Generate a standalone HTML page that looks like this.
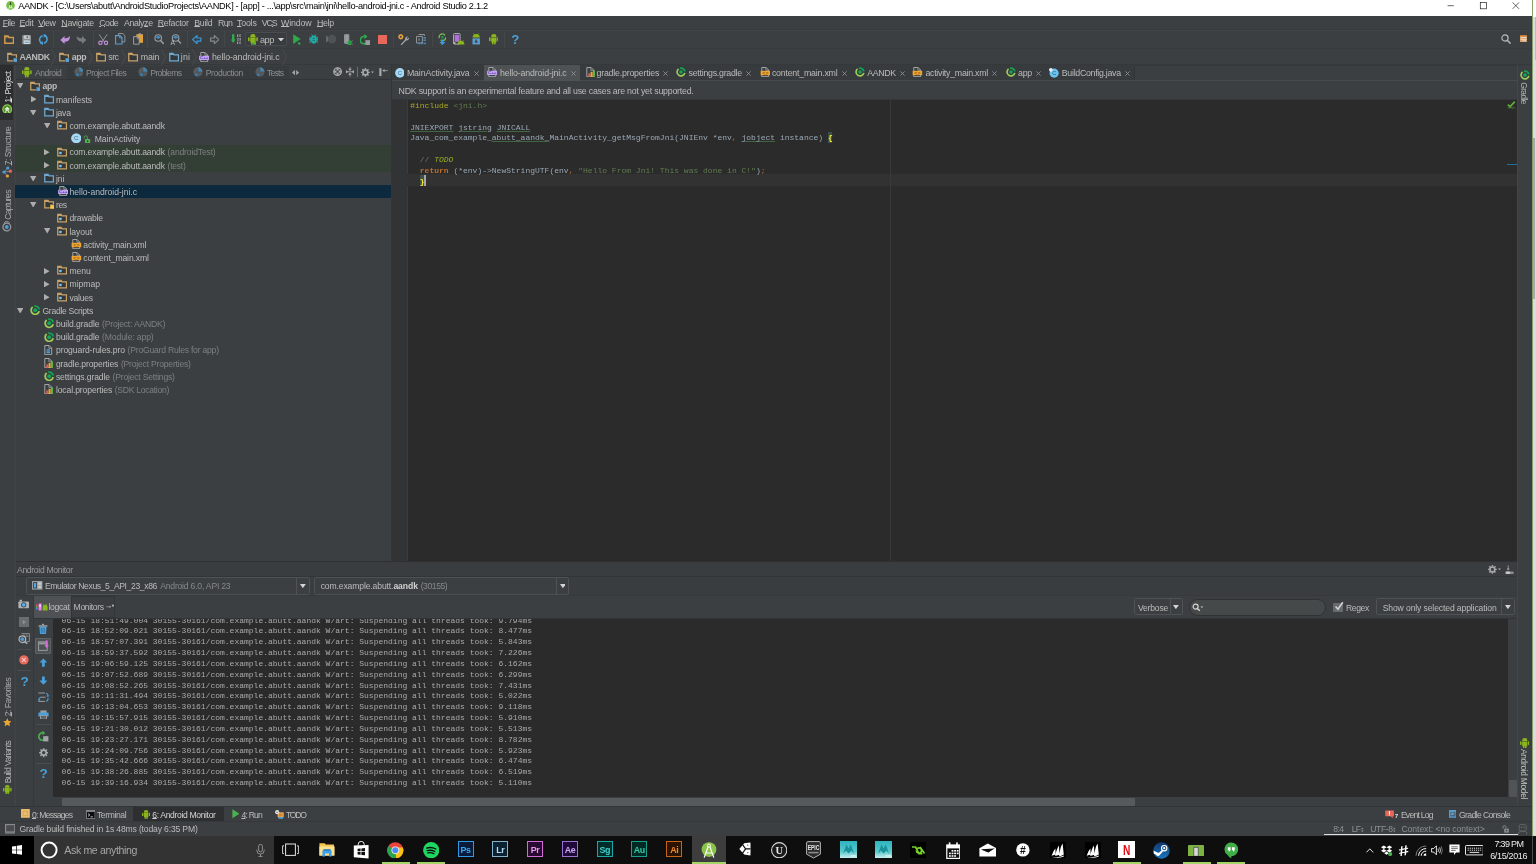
<!DOCTYPE html>
<html lang="en"><head><meta charset="utf-8"><title>AANDK - Android Studio 2.1.2</title>
<style>
html,body{margin:0;padding:0;background:#3c3f41;overflow:hidden}
#r{will-change:transform;position:relative;width:1536px;height:864px;overflow:hidden;background:#3c3f41;font-family:"Liberation Sans",sans-serif;font-size:8.6px;color:#bbb}
#r div,#r span,#r svg{position:absolute;display:block}
#r span{white-space:pre}
#r span span{position:static;display:inline}
#r .m{font-family:"Liberation Mono",monospace}
#r u{text-decoration:underline;text-decoration-thickness:0.6px;text-underline-offset:0.4px}
</style></head><body><div id="r">
<div style="left:0px;top:0px;width:1532px;height:15.8px;background:#ffffff;"></div>
<span style="left:18.2px;top:-0.3px;font-size:9.2px;line-height:12px;color:#000;letter-spacing:-0.31px;">AANDK - [C:\Users\abutt\AndroidStudioProjects\AANDK] - [app] - ...\app\src\main\jni\hello-android-jni.c - Android Studio 2.1.2</span>
<svg style="left:1444px;top:0px;" width="80" height="12" viewBox="0 0 80 12"><g stroke="#222" stroke-width="0.7" fill="none"><path d="M3.6 5.7H9.8"/><rect x="36.3" y="2.5" width="6.3" height="6.3"/><path d="M68.6 2.4L75 8.8M75 2.4L68.6 8.8"/></g></svg>
<div style="left:0px;top:15.8px;width:1532px;height:14.2px;background:#3c3f41;"></div>
<div style="left:0px;top:29.2px;width:1532px;height:0.8px;background:#383b3d;"></div>
<span style="left:2.7px;top:16.53px;font-size:8.8px;line-height:12px;color:#bbbbbb;letter-spacing:-0.5px;"><u>F</u>ile</span>
<span style="left:19.6px;top:16.53px;font-size:8.8px;line-height:12px;color:#bbbbbb;letter-spacing:-0.39px;"><u>E</u>dit</span>
<span style="left:38.3px;top:16.53px;font-size:8.8px;line-height:12px;color:#bbbbbb;letter-spacing:-0.43px;"><u>V</u>iew</span>
<span style="left:61.3px;top:16.53px;font-size:8.8px;line-height:12px;color:#bbbbbb;letter-spacing:-0.28px;"><u>N</u>avigate</span>
<span style="left:99.2px;top:16.53px;font-size:8.8px;line-height:12px;color:#bbbbbb;letter-spacing:-0.53px;"><u>C</u>ode</span>
<span style="left:123.9px;top:16.53px;font-size:8.8px;line-height:12px;color:#bbbbbb;letter-spacing:-0.36px;">Analy<u>z</u>e</span>
<span style="left:157.8px;top:16.53px;font-size:8.8px;line-height:12px;color:#bbbbbb;letter-spacing:-0.31px;"><u>R</u>efactor</span>
<span style="left:194.3px;top:16.53px;font-size:8.8px;line-height:12px;color:#bbbbbb;letter-spacing:-0.31px;"><u>B</u>uild</span>
<span style="left:218px;top:16.53px;font-size:8.8px;line-height:12px;color:#bbbbbb;letter-spacing:-0.65px;">R<u>u</u>n</span>
<span style="left:237px;top:16.53px;font-size:8.8px;line-height:12px;color:#bbbbbb;letter-spacing:-0.19px;"><u>T</u>ools</span>
<span style="left:261.7px;top:16.53px;font-size:8.8px;line-height:12px;color:#bbbbbb;letter-spacing:-1.06px;">VC<u>S</u></span>
<span style="left:281px;top:16.53px;font-size:8.8px;line-height:12px;color:#bbbbbb;letter-spacing:-0.15px;"><u>W</u>indow</span>
<span style="left:316.9px;top:16.53px;font-size:8.8px;line-height:12px;color:#bbbbbb;letter-spacing:-0.3px;"><u>H</u>elp</span>
<div style="left:0px;top:30px;width:1532px;height:18.3px;background:#3c3f41;"></div>
<div style="left:0px;top:30px;width:1532px;height:0.8px;background:#414446;"></div>
<div style="left:0px;top:48.1px;width:1532px;height:0.9px;background:#383b3d;"></div>
<div style="left:0px;top:49px;width:1532px;height:16px;background:#3c3f41;"></div>
<div style="left:0px;top:64.1px;width:1532px;height:0.8px;background:#36393b;"></div>
<span style="left:19.5px;top:51.33px;font-size:8.8px;line-height:12px;color:#bbbbbb;letter-spacing:-0.3px;font-weight:bold;">AANDK</span>
<span style="left:71.8px;top:51.33px;font-size:8.8px;line-height:12px;color:#bbbbbb;letter-spacing:-0.38px;font-weight:bold;">app</span>
<span style="left:108.3px;top:51.33px;font-size:8.8px;line-height:12px;color:#bbbbbb;letter-spacing:-0.51px;">src</span>
<span style="left:140.8px;top:51.33px;font-size:8.8px;line-height:12px;color:#bbbbbb;letter-spacing:-0.19px;">main</span>
<span style="left:180.8px;top:51.33px;font-size:8.8px;line-height:12px;color:#bbbbbb;letter-spacing:0.17px;">jni</span>
<span style="left:211.9px;top:51.33px;font-size:8.8px;line-height:12px;color:#bbbbbb;letter-spacing:-0.1px;">hello-android-jni.c</span>
<div style="left:53.3px;top:31px;width:0.7px;height:16.4px;background:#45484a;"></div>
<div style="left:92.7px;top:31px;width:0.7px;height:16.4px;background:#45484a;"></div>
<div style="left:147.4px;top:31px;width:0.7px;height:16.4px;background:#45484a;"></div>
<div style="left:186.6px;top:31px;width:0.7px;height:16.4px;background:#45484a;"></div>
<div style="left:224px;top:31px;width:0.7px;height:16.4px;background:#45484a;"></div>
<div style="left:392.6px;top:31px;width:0.7px;height:16.4px;background:#45484a;"></div>
<div style="left:431.5px;top:31px;width:0.7px;height:16.4px;background:#45484a;"></div>
<div style="left:503.5px;top:31px;width:0.7px;height:16.4px;background:#45484a;"></div>
<svg style="left:4px;top:34.9px;" width="10.4" height="9" viewBox="0 0 10.4 9"><path d="M0.8 0.9H4L5 2.5H9.5V8.2H0.8Z" fill="#3c3f41" stroke="#cf9c4e" stroke-width="1.5"/><path d="M0.8 0.9H4L4.8 2.5H0.8Z" fill="#cf9c4e"/></svg>
<svg style="left:22px;top:34.8px;" width="9.4" height="9.8" viewBox="0 0 9.4 9.8"><rect x="0.3" y="0.3" width="8.8" height="8.8" fill="#8d9092"/><rect x="1.8" y="0.3" width="5.8" height="3.6" fill="#c4c7c9"/><rect x="4.6" y="0.9" width="1.4" height="2.2" fill="#6a6d6f"/><rect x="1.8" y="5.4" width="5.8" height="3.7" fill="#d4d7d9"/><rect x="2.6" y="6.8" width="4.2" height="1" fill="#4a9fd8"/></svg>
<svg style="left:38.4px;top:34px;" width="10.8" height="10.8" viewBox="0 0 10.8 10.8"><path d="M3.97 9.06A3.90 3.90 0 0 1 6.63 1.74" fill="none" stroke="#4a9fd8" stroke-width="1.5" stroke-dasharray="9.6 20"/><path d="M6.63 1.74A3.90 3.90 0 0 1 3.97 9.06" fill="none" stroke="#4a9fd8" stroke-width="1.5" stroke-dasharray="9.6 20"/><path d="M5.6 -0.2L9 1.6L5.8 3.6Z" fill="#4a9fd8"/><path d="M5 11L1.6 9.2L4.8 7.2Z" fill="#4a9fd8"/></svg>
<svg style="left:59.6px;top:34.7px;" width="10.6" height="9.4" viewBox="0 0 10.6 9.4"><path d="M0.3 5L4.6 1V3.4Q9.6 3 9.8 0.6Q10.6 6.4 4.6 6.8V9Z" fill="#c48fdc"/></svg>
<svg style="left:76.4px;top:34.7px;" width="10.6" height="9.4" viewBox="0 0 10.6 9.4"><g transform="translate(10.6 0) scale(-1 1)"><path d="M0.3 5L4.6 1V3.4Q9.6 3 9.8 0.6Q10.6 6.4 4.6 6.8V9Z" fill="#787b7d"/></g></svg>
<svg style="left:98px;top:33.6px;" width="10.4" height="11" viewBox="0 0 10.4 11"><path d="M1.2 0.4L6.4 8M9.2 0.4L4 8" stroke="#9a9d9f" stroke-width="0.9" fill="none"/><circle cx="2.4" cy="8.8" r="1.7" fill="none" stroke="#c48fdc" stroke-width="1.1"/><circle cx="8" cy="8.8" r="1.7" fill="none" stroke="#c48fdc" stroke-width="1.1"/></svg>
<svg style="left:115.2px;top:33.4px;" width="10.4" height="11.6" viewBox="0 0 10.4 11.6"><path d="M3.4 0.5H7.8L9.9 2.6V8.8H3.4Z" fill="#3c3f41" stroke="#9a9d9f" stroke-width="0.9"/><path d="M0.6 2.6H5L7 4.6V11H0.6Z" fill="#3c3f41" stroke="#5a9fd4" stroke-width="1.1"/><path d="M4.6 2.8V5H6.8" fill="none" stroke="#5a9fd4" stroke-width="0.8"/></svg>
<svg style="left:132.6px;top:33.2px;" width="10.6" height="11.8" viewBox="0 0 10.6 11.8"><rect x="3.4" y="1.2" width="6.8" height="8.6" fill="#dda23c"/><rect x="5.4" y="0.3" width="2.8" height="1.8" rx="0.5" fill="#9a9d9f"/><path d="M0.6 3.6H4.4L6.2 5.4V11.2H0.6Z" fill="#3c3f41" stroke="#a7a9ab" stroke-width="0.9"/><path d="M4.2 3.8V5.8H6" fill="none" stroke="#a7a9ab" stroke-width="0.7"/></svg>
<svg style="left:153.6px;top:33.8px;" width="10.6" height="10.8" viewBox="0 0 10.6 10.8"><circle cx="4.2" cy="4" r="3.3" fill="#3c3f41" stroke="#9a9d9f" stroke-width="1.1"/><ellipse cx="4.2" cy="3.3" rx="2" ry="1.4" fill="#3f8fc8"/><path d="M6.6 6.6L9.8 9.9" stroke="#9a9d9f" stroke-width="1.5"/></svg>
<svg style="left:170.2px;top:33.8px;" width="11.4" height="11.4" viewBox="0 0 11.4 11.4"><g transform="translate(1.4 0)"><circle cx="4.2" cy="4" r="3.3" fill="#3c3f41" stroke="#9a9d9f" stroke-width="1.1"/><ellipse cx="4.2" cy="3.3" rx="2" ry="1.4" fill="#3f8fc8"/><path d="M6.6 6.6L9.6 9.4" stroke="#9a9d9f" stroke-width="1.4"/></g><text x="2.7" y="11.2" font-family="Liberation Sans,sans-serif" font-size="6.8" text-anchor="middle" fill="#b4b7b9">A</text></svg>
<svg style="left:192.4px;top:34.9px;" width="9.6" height="9.4" viewBox="0 0 9.6 9.4"><path d="M0.6 4.6L5 0.6V3H8.8V6.2H5V8.6Z" fill="none" stroke="#3a9ae0" stroke-width="1.2" stroke-linejoin="miter"/></svg>
<svg style="left:209.8px;top:34.9px;" width="9.6" height="9.4" viewBox="0 0 9.6 9.4"><g transform="translate(9.4 0) scale(-1 1)"><path d="M0.6 4.6L5 0.6V3H8.8V6.2H5V8.6Z" fill="none" stroke="#85888a" stroke-width="1.2" stroke-linejoin="miter"/></g></svg>
<svg style="left:231px;top:33.8px;" width="10.8" height="10.6" viewBox="0 0 10.8 10.6"><path d="M1 0.2H3.4V5.6H4.6L2.2 9L-0.2 5.6H1Z" fill="#30a94c"/><g fill="#9a9d9f"><rect x="6" y="0.4" width="1.2" height="2.6"/><rect x="8.4" y="0.4" width="1.2" height="2.6"/><rect x="8.1" y="0.9" width="1.8" height="1.6" fill="#3c3f41"/><rect x="8.4" y="0.4" width="0.5" height="2.6"/><rect x="9.4" y="0.4" width="0.5" height="2.6"/><rect x="6" y="4" width="0.5" height="2.6"/><rect x="7" y="4" width="0.5" height="2.6"/><rect x="6" y="4" width="1.5" height="0.5"/><rect x="6" y="6.1" width="1.5" height="0.5"/><rect x="8.6" y="4" width="1.2" height="2.6"/><rect x="6" y="7.6" width="1.2" height="2.6"/><rect x="8.4" y="7.6" width="0.5" height="2.6"/><rect x="9.4" y="7.6" width="0.5" height="2.6"/><rect x="8.4" y="7.6" width="1.5" height="0.5"/><rect x="8.4" y="9.7" width="1.5" height="0.5"/></g></svg>
<div style="left:245.1px;top:32.3px;width:41.8px;height:13.9px;background:#3a3d3f;border:0.9px solid #4a4d4f;box-sizing:border-box;border-radius:2px;box-shadow:inset 0 0 0 0.6px #35383a"></div>
<svg style="left:247.75px;top:34.3px;" width="9.89" height="10.81" viewBox="0 0 9.7 10.6"><path d="M2.2 3.1A2.65 3.1 0 0 1 7.5 3.1Z" fill="#8ab51c"/><path d="M2.2 3.5H7.5V7.7A0.6 0.6 0 0 1 6.9 8.3H2.8A0.6 0.6 0 0 1 2.2 7.7Z" fill="#8ab51c"/><rect x="0" y="3.2" width="1.6" height="4" rx="0.8" fill="#8ab51c"/><rect x="8.1" y="3.2" width="1.6" height="4" rx="0.8" fill="#8ab51c"/><rect x="3" y="7.6" width="1.6" height="3" rx="0.8" fill="#8ab51c"/><rect x="5.1" y="7.6" width="1.6" height="3" rx="0.8" fill="#8ab51c"/><path d="M2.9 0L3.6 1M6.8 0L6.1 1" stroke="#8ab51c" stroke-width="0.35"/></svg>
<svg style="left:253.6px;top:42.1px;" width="2.8" height="2.8" viewBox="0 0 2.8 2.8"><circle cx="1.4" cy="1.4" r="1.35" fill="#3fc04a"/></svg>
<span style="left:259.9px;top:34.2px;font-size:9.2px;line-height:12px;color:#bbbbbb;letter-spacing:-0.42px;">app</span>
<svg style="left:277.7px;top:37.8px;" width="6" height="3.6" viewBox="0 0 6 3.6"><path d="M0 0H6L3 3.6Z" fill="#d0d0d0"/></svg>
<svg style="left:292.6px;top:34px;" width="8.6" height="10.8" viewBox="0 0 8.6 10.8"><path d="M0.2 0.2V10L7.6 5.1Z" fill="#30a94c"/><circle cx="6.2" cy="9.4" r="1.25" fill="#30a94c"/></svg>
<svg style="left:308.8px;top:34.2px;" width="9.6" height="10" viewBox="0 0 9.6 10"><ellipse cx="4.8" cy="5.6" rx="3.1" ry="4.1" fill="#22aaa4"/><path d="M2.6 0.4L3.8 2.2M7 0.4L5.8 2.2" stroke="#22aaa4" stroke-width="1"/><path d="M0.4 2.8L2.4 3.8M9.2 2.8L7.2 3.8M0 5.6H2M9.6 5.6H7.6M0.4 8.6L2.4 7.4M9.2 8.6L7.2 7.4M0.2 4.2L2 4.6M9.4 4.2L7.6 4.6M0.2 7L2 6.6M9.4 7L7.6 6.6" stroke="#22aaa4" stroke-width="0.9"/><path d="M3.6 4.4H6M3.6 6.6H6" stroke="#2c5c5c" stroke-width="0.8"/></svg>
<svg style="left:325.8px;top:34.2px;" width="10.2" height="10" viewBox="0 0 10.2 10"><defs><pattern id="chk" width="1.6" height="1.6" patternUnits="userSpaceOnUse"><rect width="1.6" height="1.6" fill="#5a5d5f"/><rect width="0.8" height="0.8" fill="#46494b"/><rect x="0.8" y="0.8" width="0.8" height="0.8" fill="#46494b"/></pattern></defs><path d="M0.2 1.6V8.4L4.4 5Z" fill="#6e7173"/><circle cx="6" cy="5" r="4.3" fill="url(#chk)"/></svg>
<svg style="left:344.2px;top:33.6px;" width="9" height="11.2" viewBox="0 0 9 11.2"><rect x="0.5" y="0.4" width="4.4" height="9" rx="0.6" fill="#8a8d8f" stroke="#a4a7a9" stroke-width="0.7"/><rect x="1.4" y="1.4" width="2.6" height="6.4" fill="#9a9d9f"/><rect x="3.8" y="6.4" width="3.6" height="4.6" rx="1.2" fill="#30a94c"/><path d="M7.2 7.6L8.8 6.8M7.2 9.8L8.8 10.4M3.8 7.6L3 7M3.8 9.8L3 10.4" stroke="#9aa09a" stroke-width="0.6"/><path d="M4.6 8H6.6M4.6 9.4H6.6" stroke="#1c6a30" stroke-width="0.5"/></svg>
<svg style="left:360px;top:33.9px;" width="10.4" height="11.2" viewBox="0 0 10.4 11.2"><path d="M7.2 7.6A3.6 3.6 0 1 1 4.6 2.6" fill="none" stroke="#30a94c" stroke-width="1.6"/><path d="M4.2 0L7.6 2.4L4.2 5Z" fill="#30a94c"/><rect x="5.4" y="6.2" width="4.8" height="4.8" fill="#9a9d9f"/></svg>
<div style="left:378px;top:34.9px;width:8.8px;height:8.7px;background:#e8685c;"></div>
<svg style="left:397.6px;top:33.6px;" width="11.4" height="11.2" viewBox="0 0 11.4 11.2"><path d="M2.6 10.6L7.2 5.6A2.5 2.5 0 0 1 10.2 2.6L8.6 4.2L9.4 5L11 3.4A2.5 2.5 0 0 1 8 6.4L3.6 11.2Z" fill="#a7a9ab"/><circle cx="2.8" cy="2.8" r="1.7" fill="none" stroke="#e8a23c" stroke-width="1.5"/><path d="M2.8 0V1M2.8 4.6V5.6M0 2.8H1M4.6 2.8H5.6M0.8 0.8L1.5 1.5M4.1 4.1L4.8 4.8M0.8 4.8L1.5 4.1M4.1 1.5L4.8 0.8" stroke="#e8a23c" stroke-width="0.8"/></svg>
<svg style="left:415.8px;top:33.8px;" width="10.6" height="10.8" viewBox="0 0 10.6 10.8"><path d="M2.6 0.5H8.4V2M0.5 2.4H6.4V9H0.5Z" fill="none" stroke="#9a9d9f" stroke-width="0.9"/><rect x="2" y="4.4" width="2" height="2.4" fill="#6a6d6f"/><g fill="#3f97dc"><rect x="7.6" y="3" width="1.2" height="1.6"/><rect x="9.2" y="3" width="1.2" height="1.6"/><rect x="7.6" y="5.4" width="1.2" height="1.6"/><rect x="9.2" y="5.4" width="1.2" height="1.6"/><rect x="2.6" y="8.6" width="1.6" height="1.6"/><rect x="5" y="8.6" width="1.6" height="1.6"/><rect x="7.6" y="8.6" width="1.2" height="1.6"/><rect x="9.2" y="8.6" width="1.2" height="1.6"/></g></svg>
<svg style="left:437.6px;top:32.8px;" width="8.8" height="12.4" viewBox="0 0 8.8 12.4"><circle cx="4.4" cy="4.2" r="3.3" fill="none" stroke="#7fbf52" stroke-width="1.3" stroke-dasharray="7 2.2 9 2.5"/><rect x="3.2" y="3" width="2.4" height="2.4" fill="#12a050"/><path d="M3.2 6.8H5.6V9H7.4L4.4 12.2L1.4 9H3.2Z" fill="#3f97dc"/></svg>
<svg style="left:453.2px;top:33.4px;" width="11.8" height="11.6" viewBox="0 0 11.8 11.6"><rect x="0.5" y="0.5" width="6.6" height="10.6" rx="1" fill="#3c3f41" stroke="#a7a9ab" stroke-width="1"/><rect x="1.6" y="1.8" width="4.4" height="7" fill="#b070d8"/><rect x="0.8" y="9.4" width="1.6" height="1.4" fill="#d8d8d8"/><path d="M4.6 11.4A3.4 3.6 0 0 1 11.4 11.4Z" fill="#8ab51c"/><path d="M5.4 7L6.4 8.4M10.6 7L9.6 8.4" stroke="#8ab51c" stroke-width="0.6"/></svg>
<svg style="left:472.2px;top:33px;" width="8.4" height="12" viewBox="0 0 8.4 12"><path d="M0.6 4.6A3.6 3.6 0 0 1 7.8 4.6Z" fill="#8ab51c"/><path d="M1.4 0.2L2.6 1.8M7 0.2L5.8 1.8" stroke="#8ab51c" stroke-width="0.6"/><rect x="0.5" y="5.4" width="7.4" height="6" fill="#5a9fd4"/><path d="M3.4 6.4H5V8.4H6.2L4.2 10.6L2.2 8.4H3.4Z" fill="#2b2b2b"/><path d="M4.2 5.4V11.4" stroke="#8cc0e8" stroke-width="0.4"/></svg>
<svg style="left:488.65px;top:34.1px;" width="9.7" height="10.6" viewBox="0 0 9.7 10.6"><path d="M2.2 3.1A2.65 3.1 0 0 1 7.5 3.1Z" fill="#8ab51c"/><path d="M2.2 3.5H7.5V7.7A0.6 0.6 0 0 1 6.9 8.3H2.8A0.6 0.6 0 0 1 2.2 7.7Z" fill="#8ab51c"/><rect x="0" y="3.2" width="1.6" height="4" rx="0.8" fill="#8ab51c"/><rect x="8.1" y="3.2" width="1.6" height="4" rx="0.8" fill="#8ab51c"/><rect x="3" y="7.6" width="1.6" height="3" rx="0.8" fill="#8ab51c"/><rect x="5.1" y="7.6" width="1.6" height="3" rx="0.8" fill="#8ab51c"/><path d="M2.9 0L3.6 1M6.8 0L6.1 1" stroke="#8ab51c" stroke-width="0.35"/></svg>
<span style="left:511.2px;top:32.85px;font-size:13.2px;line-height:14px;color:#4a9fd8;font-weight:bold;">?</span>
<svg style="left:1501px;top:33.6px;" width="10.4" height="10.4" viewBox="0 0 10.4 10.4"><circle cx="4" cy="4" r="3.1" fill="none" stroke="#b4b7b9" stroke-width="1.2"/><path d="M6.2 6.2L9.6 9.6" stroke="#b4b7b9" stroke-width="1.5"/></svg>
<svg style="left:1519.6px;top:35px;" width="7.2" height="7" viewBox="0 0 7.2 7"><rect width="7.2" height="7" fill="#d9a066"/><rect x="0" y="0" width="7.2" height="1.4" fill="#c87c3c"/><path d="M0.6 2.6H6.6M0.6 4.4H6.6" stroke="#f4e4c8" stroke-width="0.9"/><rect x="2.4" y="4.8" width="3.6" height="1.6" fill="#d8c8c8"/></svg>
<svg style="left:6.65px;top:51.5px;" width="10.2" height="10.2" viewBox="0 0 16 16"><path d="M1.2 2.2H6.4L7.8 4.6H14.8V13.8H1.2Z" fill="#33373a" stroke="#c9a268" stroke-width="2" stroke-linejoin="miter"/><path d="M1.2 2.2H6.4L7.4 4.6H1.2Z" fill="#c9a268"/><rect x="9.4" y="9" width="6.6" height="6.6" fill="#3c3f41"/><rect x="10.2" y="9.8" width="5.8" height="5.8" fill="#5da3d4"/></svg>
<svg style="left:59.25px;top:51.5px;" width="10.2" height="10.2" viewBox="0 0 16 16"><path d="M1.2 2.2H6.4L7.8 4.6H14.8V13.8H1.2Z" fill="#33373a" stroke="#c9a268" stroke-width="2" stroke-linejoin="miter"/><path d="M1.2 2.2H6.4L7.4 4.6H1.2Z" fill="#c9a268"/><rect x="9.4" y="9" width="6.6" height="6.6" fill="#3c3f41"/><rect x="10.2" y="9.8" width="5.8" height="5.8" fill="#5da3d4"/></svg>
<svg style="left:96.05px;top:51.5px;" width="10.2" height="10.2" viewBox="0 0 16 16"><path d="M1.2 2.2H6.4L7.8 4.6H14.8V13.8H1.2Z" fill="#33373a" stroke="#c9a268" stroke-width="2" stroke-linejoin="miter"/><path d="M1.2 2.2H6.4L7.4 4.6H1.2Z" fill="#c9a268"/></svg>
<svg style="left:128.35px;top:51.5px;" width="10.2" height="10.2" viewBox="0 0 16 16"><path d="M1.2 2.2H6.4L7.8 4.6H14.8V13.8H1.2Z" fill="#33373a" stroke="#c9a268" stroke-width="2" stroke-linejoin="miter"/><path d="M1.2 2.2H6.4L7.4 4.6H1.2Z" fill="#c9a268"/></svg>
<svg style="left:168.65px;top:51.5px;" width="10.2" height="10.2" viewBox="0 0 16 16"><path d="M1.2 2.2H6.4L7.8 4.6H14.8V13.8H1.2Z" fill="#33373a" stroke="#6eaad2" stroke-width="2" stroke-linejoin="miter"/><path d="M1.2 2.2H6.4L7.4 4.6H1.2Z" fill="#6eaad2"/></svg>
<svg style="left:199.2px;top:51.9px;" width="10.2" height="10.2" viewBox="0 0 16 16"><path d="M2.8 0.8H9.6L13.6 4.8V15.2H2.8Z" fill="#3c3f41" stroke="#a7a9ab" stroke-width="1.5"/><path d="M9.2 1V5.2H13.4" fill="none" stroke="#a7a9ab" stroke-width="1.2"/><rect x="0.2" y="6" width="15.6" height="6.6" fill="#c3a4f4"/><text x="8" y="11.7" font-family="Liberation Sans,sans-serif" font-weight="bold" font-size="6.8" text-anchor="middle" fill="#5a3aa8">C++</text></svg>
<svg style="left:51.4px;top:48.6px;" width="5" height="16.2" viewBox="0 0 5 16.2"><path d="M0.4 0.2L4.4 8.1L0.4 16" fill="none" stroke="#4c4f51" stroke-width="0.8"/></svg>
<svg style="left:88.2px;top:48.6px;" width="5" height="16.2" viewBox="0 0 5 16.2"><path d="M0.4 0.2L4.4 8.1L0.4 16" fill="none" stroke="#4c4f51" stroke-width="0.8"/></svg>
<svg style="left:121px;top:48.6px;" width="5" height="16.2" viewBox="0 0 5 16.2"><path d="M0.4 0.2L4.4 8.1L0.4 16" fill="none" stroke="#4c4f51" stroke-width="0.8"/></svg>
<svg style="left:161px;top:48.6px;" width="5" height="16.2" viewBox="0 0 5 16.2"><path d="M0.4 0.2L4.4 8.1L0.4 16" fill="none" stroke="#4c4f51" stroke-width="0.8"/></svg>
<svg style="left:192.4px;top:48.6px;" width="5" height="16.2" viewBox="0 0 5 16.2"><path d="M0.4 0.2L4.4 8.1L0.4 16" fill="none" stroke="#4c4f51" stroke-width="0.8"/></svg>
<svg style="left:281.6px;top:48.6px;" width="5" height="16.2" viewBox="0 0 5 16.2"><path d="M0.4 0.2L4.4 8.1L0.4 16" fill="none" stroke="#4c4f51" stroke-width="0.8"/></svg>
<svg style="left:5.9px;top:0.6px;" width="9" height="10" viewBox="0 0 9 10"><circle cx="4.5" cy="4.4" r="4.3" fill="#78c043"/><path d="M4.5 2.2L2.6 8.6M4.5 2.2L6.4 8.6" fill="none" stroke="#eaf6de" stroke-width="0.8"/><path d="M3.2 6.4H5.8" stroke="#eaf6de" stroke-width="0.7"/><path d="M4.5 1.2V3.4" stroke="#3a4a30" stroke-width="1"/><circle cx="4.5" cy="3.2" r="1" fill="#3a4a30"/></svg>
<div style="left:0px;top:65px;width:14.5px;height:757px;background:#3c3f41;"></div>
<div style="left:0px;top:65px;width:14px;height:55.4px;background:#2b2d2e;"></div>
<div style="left:13.4px;top:65px;width:0.7px;height:741px;background:#393b3d;"></div>
<div style="left:14.7px;top:65px;width:376.1px;height:15px;background:#3c3f41;"></div>
<div style="left:67px;top:65.5px;width:222px;height:13.5px;background:#383b3d;"></div>
<div style="left:14.7px;top:79.2px;width:376.1px;height:0.8px;background:#323537;"></div>
<svg style="left:22.35px;top:67px;" width="9.7" height="10.6" viewBox="0 0 9.7 10.6"><path d="M2.2 3.1A2.65 3.1 0 0 1 7.5 3.1Z" fill="#8ab51c"/><path d="M2.2 3.5H7.5V7.7A0.6 0.6 0 0 1 6.9 8.3H2.8A0.6 0.6 0 0 1 2.2 7.7Z" fill="#8ab51c"/><rect x="0" y="3.2" width="1.6" height="4" rx="0.8" fill="#8ab51c"/><rect x="8.1" y="3.2" width="1.6" height="4" rx="0.8" fill="#8ab51c"/><rect x="3" y="7.6" width="1.6" height="3" rx="0.8" fill="#8ab51c"/><rect x="5.1" y="7.6" width="1.6" height="3" rx="0.8" fill="#8ab51c"/><path d="M2.9 0L3.6 1M6.8 0L6.1 1" stroke="#8ab51c" stroke-width="0.35"/></svg>
<span style="left:35px;top:66.75px;font-size:8.6px;line-height:12px;color:#8c8e90;letter-spacing:-0.46px;">Android</span>
<svg style="left:73.6px;top:67px;" width="9.8" height="9.8" viewBox="0 0 16 16"><circle cx="8" cy="8" r="7.5" fill="#585b5d"/><path d="M8 8V0.5A7.5 7.5 0 0 1 15.5 8Z" fill="#4a84ab"/><path d="M8 8V15.5A7.5 7.5 0 0 1 1.9 12.4Z" fill="#3f7ea8"/><path d="M8 0.5V15.5M8 8H15.5M8 8L1.9 12.4" stroke="#3c3f41" stroke-width="0.7"/></svg>
<span style="left:86px;top:66.75px;font-size:8.6px;line-height:12px;color:#8c8e90;letter-spacing:-0.55px;">Project Files</span>
<svg style="left:138px;top:67px;" width="9.8" height="9.8" viewBox="0 0 16 16"><circle cx="8" cy="8" r="7.5" fill="#585b5d"/><path d="M8 8V0.5A7.5 7.5 0 0 1 15.5 8Z" fill="#4a84ab"/><path d="M8 8V15.5A7.5 7.5 0 0 1 1.9 12.4Z" fill="#3f7ea8"/><path d="M8 0.5V15.5M8 8H15.5M8 8L1.9 12.4" stroke="#3c3f41" stroke-width="0.7"/></svg>
<span style="left:150.3px;top:66.75px;font-size:8.6px;line-height:12px;color:#8c8e90;letter-spacing:-0.65px;">Problems</span>
<svg style="left:193.3px;top:67px;" width="9.8" height="9.8" viewBox="0 0 16 16"><circle cx="8" cy="8" r="7.5" fill="#585b5d"/><path d="M8 8V0.5A7.5 7.5 0 0 1 15.5 8Z" fill="#4a84ab"/><path d="M8 8V15.5A7.5 7.5 0 0 1 1.9 12.4Z" fill="#3f7ea8"/><path d="M8 0.5V15.5M8 8H15.5M8 8L1.9 12.4" stroke="#3c3f41" stroke-width="0.7"/></svg>
<span style="left:205.7px;top:66.75px;font-size:8.6px;line-height:12px;color:#8c8e90;letter-spacing:-0.39px;">Production</span>
<svg style="left:255px;top:67px;" width="9.8" height="9.8" viewBox="0 0 16 16"><circle cx="8" cy="8" r="7.5" fill="#585b5d"/><path d="M8 8V0.5A7.5 7.5 0 0 1 15.5 8Z" fill="#4a84ab"/><path d="M8 8V15.5A7.5 7.5 0 0 1 1.9 12.4Z" fill="#3f7ea8"/><path d="M8 0.5V15.5M8 8H15.5M8 8L1.9 12.4" stroke="#3c3f41" stroke-width="0.7"/></svg>
<span style="left:267.1px;top:66.75px;font-size:8.6px;line-height:12px;color:#8c8e90;letter-spacing:-0.79px;">Tests</span>
<svg style="left:291.7px;top:69.8px;" width="7.2" height="5.2" viewBox="0 0 7.2 5.2"><path d="M3 0V5.2L0 2.6ZM4.2 0V5.2L7.2 2.6Z" fill="#a4a6a8"/></svg>
<svg style="left:333px;top:67.3px;" width="9.2" height="9.2" viewBox="0 0 9.2 9.2"><circle cx="4.6" cy="4.6" r="3.8" fill="none" stroke="#a6a8aa" stroke-width="1.3"/><path d="M4.6 0.8V3.5M4.6 5.7V8.4M0.8 4.6H3.5M5.7 4.6H8.4" stroke="#a6a8aa" stroke-width="2.1"/></svg>
<svg style="left:346px;top:67.4px;" width="8" height="9.6" viewBox="0 0 8 9.6"><path d="M4 0V2.6M4 7V9.6" stroke="#a6a8aa" stroke-width="0.8"/><path d="M2.2 1.8L4 4L5.8 1.8ZM2.2 7.8L4 5.6L5.8 7.8Z" fill="#a6a8aa"/><path d="M0 3V6.6L2.4 4.8ZM8 3V6.6L5.6 4.8Z" fill="#a6a8aa"/><path d="M1 4.8H7" stroke="#a6a8aa" stroke-width="0.9"/></svg>
<div style="left:357px;top:66.7px;width:1px;height:10.1px;background:#6c6e70;"></div>
<svg style="left:361.2px;top:67.8px;" width="14" height="9" viewBox="0 0 14 9"><g transform="translate(4.4 4.4)"><circle r="2.4" fill="none" stroke="#a6a8aa" stroke-width="1.6"/><g stroke="#a6a8aa" stroke-width="1.4"><path d="M0 -4.4V-2.6M0 4.4V2.6M-4.4 0H-2.6M4.4 0H2.6M-3.1 -3.1L-1.9 -1.9M3.1 3.1L1.9 1.9M-3.1 3.1L-1.9 1.9M3.1 -3.1L1.9 -1.9"/></g></g><path d="M10 3.4H13L11.5 5.2Z" fill="#a6a8aa"/></svg>
<svg style="left:378.6px;top:68px;" width="9.4" height="8.4" viewBox="0 0 9.4 8.4"><path d="M1.4 0.2V8" stroke="#a6a8aa" stroke-width="2.2"/><path d="M4.4 2.6H8.8" stroke="#a6a8aa" stroke-width="0.8"/><path d="M5.6 1L3.2 2.6L5.6 4.2Z" fill="#a6a8aa"/></svg>
<div style="left:14.7px;top:80px;width:376.1px;height:481.3px;background:#3c3f41;"></div>
<div style="left:390.8px;top:65px;width:0.8px;height:496.3px;background:#323537;"></div>
<div style="left:14.1px;top:65px;width:1.5px;height:496.3px;background:#404244;"></div>
<div style="left:14.7px;top:145.4px;width:376.1px;height:26.4px;background:#333e35;"></div>
<div style="left:14.7px;top:185px;width:376.1px;height:13.2px;background:#0d293e;"></div>
<svg style="left:16.8px;top:83.1px;" width="6.4" height="5.6" viewBox="0 0 6.4 5.6"><path d="M0 0H6.4L3.2 5.6Z" fill="#adadad"/></svg>
<svg style="left:30.15px;top:80.5px;" width="10.2" height="10.2" viewBox="0 0 16 16"><path d="M1.2 2.2H6.4L7.8 4.6H14.8V13.8H1.2Z" fill="#33373a" stroke="#c9a268" stroke-width="2" stroke-linejoin="miter"/><path d="M1.2 2.2H6.4L7.4 4.6H1.2Z" fill="#c9a268"/><rect x="9.4" y="9" width="6.6" height="6.6" fill="#3c3f41"/><rect x="10.2" y="9.8" width="5.8" height="5.8" fill="#5da3d4"/></svg>
<span style="left:42.4px;top:80.35px;font-size:8.6px;line-height:12px;color:#bbbbbb;letter-spacing:-0.2px;font-weight:bold;">app</span>
<svg style="left:30.85px;top:96px;" width="5.6" height="6.4" viewBox="0 0 5.6 6.4"><path d="M0 0V6.4L5.6 3.2Z" fill="#adadad"/></svg>
<svg style="left:43.7px;top:93.7px;" width="10.2" height="10.2" viewBox="0 0 16 16"><path d="M1.2 2.2H6.4L7.8 4.6H14.8V13.8H1.2Z" fill="#33373a" stroke="#6eaad2" stroke-width="2" stroke-linejoin="miter"/><path d="M1.2 2.2H6.4L7.4 4.6H1.2Z" fill="#6eaad2"/></svg>
<span style="left:55.95px;top:93.55px;font-size:8.6px;line-height:12px;color:#bbbbbb;letter-spacing:-0.08px;">manifests</span>
<svg style="left:30.35px;top:109.5px;" width="6.4" height="5.6" viewBox="0 0 6.4 5.6"><path d="M0 0H6.4L3.2 5.6Z" fill="#adadad"/></svg>
<svg style="left:43.7px;top:106.9px;" width="10.2" height="10.2" viewBox="0 0 16 16"><path d="M1.2 2.2H6.4L7.8 4.6H14.8V13.8H1.2Z" fill="#33373a" stroke="#6eaad2" stroke-width="2" stroke-linejoin="miter"/><path d="M1.2 2.2H6.4L7.4 4.6H1.2Z" fill="#6eaad2"/></svg>
<span style="left:55.95px;top:106.75px;font-size:8.6px;line-height:12px;color:#bbbbbb;letter-spacing:-0.26px;">java</span>
<svg style="left:43.9px;top:122.7px;" width="6.4" height="5.6" viewBox="0 0 6.4 5.6"><path d="M0 0H6.4L3.2 5.6Z" fill="#adadad"/></svg>
<svg style="left:57.25px;top:120.1px;" width="10.2" height="10.2" viewBox="0 0 16 16"><path d="M1.2 2.2H6.4L7.8 4.6H14.8V13.8H1.2Z" fill="#33373a" stroke="#c9a268" stroke-width="2" stroke-linejoin="miter"/><path d="M1.2 2.2H6.4L7.4 4.6H1.2Z" fill="#c9a268"/><rect x="3.5" y="7.4" width="3.8" height="3.8" rx="1" fill="#74c2f0"/></svg>
<span style="left:69.5px;top:119.95px;font-size:8.6px;line-height:12px;color:#bbbbbb;letter-spacing:-0.13px;">com.example.abutt.aandk</span>
<svg style="left:70.95px;top:132.8px;" width="10.5" height="10.5" viewBox="0 0 16 16"><circle cx="8" cy="8" r="7.8" fill="#a5d8f3"/><text x="8" y="11.4" font-family="Liberation Sans,sans-serif" font-size="9.5" text-anchor="middle" fill="#4a6a80">C</text></svg>
<svg style="left:83.2px;top:134.5px;" width="7.4" height="8.6" viewBox="0 0 7.4 8.6"><path d="M1.2 3.4V2.4A1.6 1.6 0 0 1 4.4 2.4V4.2" fill="none" stroke="#4aa54a" stroke-width="1"/><rect x="2" y="4" width="5.2" height="4.4" rx="0.5" fill="#4fb14f"/><rect x="4" y="5.3" width="1.2" height="1.8" fill="#3c3f41"/></svg>
<span style="left:94.7px;top:133.15px;font-size:8.6px;line-height:12px;color:#bbbbbb;letter-spacing:-0.01px;">MainActivity</span>
<svg style="left:44.4px;top:148.8px;" width="5.6" height="6.4" viewBox="0 0 5.6 6.4"><path d="M0 0V6.4L5.6 3.2Z" fill="#adadad"/></svg>
<svg style="left:57.25px;top:146.5px;" width="10.2" height="10.2" viewBox="0 0 16 16"><path d="M1.2 2.2H6.4L7.8 4.6H14.8V13.8H1.2Z" fill="#33373a" stroke="#c9a268" stroke-width="2" stroke-linejoin="miter"/><path d="M1.2 2.2H6.4L7.4 4.6H1.2Z" fill="#c9a268"/><rect x="3.5" y="7.4" width="3.8" height="3.8" rx="1" fill="#74c2f0"/></svg>
<span style="left:69.5px;top:146.35px;font-size:8.6px;line-height:12px;color:#bbbbbb;letter-spacing:-0.13px;">com.example.abutt.aandk</span>
<span style="left:167.6px;top:146.35px;font-size:8.6px;line-height:12px;color:#7d8082;letter-spacing:-0.17px;">(androidTest)</span>
<svg style="left:44.4px;top:162px;" width="5.6" height="6.4" viewBox="0 0 5.6 6.4"><path d="M0 0V6.4L5.6 3.2Z" fill="#adadad"/></svg>
<svg style="left:57.25px;top:159.7px;" width="10.2" height="10.2" viewBox="0 0 16 16"><path d="M1.2 2.2H6.4L7.8 4.6H14.8V13.8H1.2Z" fill="#33373a" stroke="#c9a268" stroke-width="2" stroke-linejoin="miter"/><path d="M1.2 2.2H6.4L7.4 4.6H1.2Z" fill="#c9a268"/><rect x="3.5" y="7.4" width="3.8" height="3.8" rx="1" fill="#74c2f0"/></svg>
<span style="left:69.5px;top:159.55px;font-size:8.6px;line-height:12px;color:#bbbbbb;letter-spacing:-0.13px;">com.example.abutt.aandk</span>
<span style="left:167.6px;top:159.55px;font-size:8.6px;line-height:12px;color:#7d8082;letter-spacing:-0.28px;">(test)</span>
<svg style="left:30.35px;top:175.5px;" width="6.4" height="5.6" viewBox="0 0 6.4 5.6"><path d="M0 0H6.4L3.2 5.6Z" fill="#adadad"/></svg>
<svg style="left:43.7px;top:172.9px;" width="10.2" height="10.2" viewBox="0 0 16 16"><path d="M1.2 2.2H6.4L7.8 4.6H14.8V13.8H1.2Z" fill="#33373a" stroke="#6eaad2" stroke-width="2" stroke-linejoin="miter"/><path d="M1.2 2.2H6.4L7.4 4.6H1.2Z" fill="#6eaad2"/></svg>
<span style="left:55.95px;top:172.75px;font-size:8.6px;line-height:12px;color:#bbbbbb;letter-spacing:-0.02px;">jni</span>
<svg style="left:57.8px;top:186.3px;" width="10.2" height="10.2" viewBox="0 0 16 16"><path d="M2.8 0.8H9.6L13.6 4.8V15.2H2.8Z" fill="#3c3f41" stroke="#a7a9ab" stroke-width="1.5"/><path d="M9.2 1V5.2H13.4" fill="none" stroke="#a7a9ab" stroke-width="1.2"/><rect x="0.2" y="6" width="15.6" height="6.6" fill="#c3a4f4"/><text x="8" y="11.7" font-family="Liberation Sans,sans-serif" font-weight="bold" font-size="6.8" text-anchor="middle" fill="#5a3aa8">C++</text></svg>
<span style="left:69.5px;top:185.95px;font-size:8.6px;line-height:12px;color:#bbbbbb;letter-spacing:-0.02px;">hello-android-jni.c</span>
<svg style="left:30.35px;top:201.9px;" width="6.4" height="5.6" viewBox="0 0 6.4 5.6"><path d="M0 0H6.4L3.2 5.6Z" fill="#adadad"/></svg>
<svg style="left:43.7px;top:199.3px;" width="10.2" height="10.2" viewBox="0 0 16 16"><path d="M1.2 2.2H6.4L7.8 4.6H14.8V13.8H1.2Z" fill="#33373a" stroke="#c9a268" stroke-width="2" stroke-linejoin="miter"/><path d="M1.2 2.2H6.4L7.4 4.6H1.2Z" fill="#c9a268"/><rect x="9" y="8" width="7" height="7.6" fill="#3c3f41"/><rect x="9.8" y="8.8" width="6.2" height="6.8" fill="#e8b52f"/><path d="M9.8 11H16M9.8 13.3H16" stroke="#f6e27a" stroke-width="0.9"/></svg>
<span style="left:55.95px;top:199.15px;font-size:8.6px;line-height:12px;color:#bbbbbb;letter-spacing:-0.37px;">res</span>
<svg style="left:57.25px;top:212.5px;" width="10.2" height="10.2" viewBox="0 0 16 16"><path d="M1.2 2.2H6.4L7.8 4.6H14.8V13.8H1.2Z" fill="#33373a" stroke="#c9a268" stroke-width="2" stroke-linejoin="miter"/><path d="M1.2 2.2H6.4L7.4 4.6H1.2Z" fill="#c9a268"/><rect x="3.5" y="7.4" width="3.8" height="3.8" rx="1" fill="#74c2f0"/></svg>
<span style="left:69.5px;top:212.35px;font-size:8.6px;line-height:12px;color:#bbbbbb;letter-spacing:-0.18px;">drawable</span>
<svg style="left:43.9px;top:228.3px;" width="6.4" height="5.6" viewBox="0 0 6.4 5.6"><path d="M0 0H6.4L3.2 5.6Z" fill="#adadad"/></svg>
<svg style="left:57.25px;top:225.7px;" width="10.2" height="10.2" viewBox="0 0 16 16"><path d="M1.2 2.2H6.4L7.8 4.6H14.8V13.8H1.2Z" fill="#33373a" stroke="#c9a268" stroke-width="2" stroke-linejoin="miter"/><path d="M1.2 2.2H6.4L7.4 4.6H1.2Z" fill="#c9a268"/><rect x="3.5" y="7.4" width="3.8" height="3.8" rx="1" fill="#74c2f0"/></svg>
<span style="left:69.5px;top:225.55px;font-size:8.6px;line-height:12px;color:#bbbbbb;letter-spacing:-0.07px;">layout</span>
<svg style="left:71.35px;top:239.1px;" width="10.2" height="10.2" viewBox="0 0 16 16"><path d="M2.8 0.8H9.6L13.6 4.8V15.2H2.8Z" fill="#3c3f41" stroke="#a7a9ab" stroke-width="1.5"/><path d="M9.2 1V5.2H13.4" fill="none" stroke="#a7a9ab" stroke-width="1.2"/><rect x="1" y="6" width="15" height="6.8" fill="#f0a732"/><text x="8.5" y="12.3" font-family="Liberation Sans,sans-serif" font-weight="bold" font-size="8.6" text-anchor="middle" fill="#a05f14">&lt;&gt;</text></svg>
<span style="left:83.3px;top:238.75px;font-size:8.6px;line-height:12px;color:#bbbbbb;letter-spacing:-0.15px;">activity_main.xml</span>
<svg style="left:71.35px;top:252.3px;" width="10.2" height="10.2" viewBox="0 0 16 16"><path d="M2.8 0.8H9.6L13.6 4.8V15.2H2.8Z" fill="#3c3f41" stroke="#a7a9ab" stroke-width="1.5"/><path d="M9.2 1V5.2H13.4" fill="none" stroke="#a7a9ab" stroke-width="1.2"/><rect x="1" y="6" width="15" height="6.8" fill="#f0a732"/><text x="8.5" y="12.3" font-family="Liberation Sans,sans-serif" font-weight="bold" font-size="8.6" text-anchor="middle" fill="#a05f14">&lt;&gt;</text></svg>
<span style="left:83.3px;top:251.95px;font-size:8.6px;line-height:12px;color:#bbbbbb;letter-spacing:-0.11px;">content_main.xml</span>
<svg style="left:44.4px;top:267.6px;" width="5.6" height="6.4" viewBox="0 0 5.6 6.4"><path d="M0 0V6.4L5.6 3.2Z" fill="#adadad"/></svg>
<svg style="left:57.25px;top:265.3px;" width="10.2" height="10.2" viewBox="0 0 16 16"><path d="M1.2 2.2H6.4L7.8 4.6H14.8V13.8H1.2Z" fill="#33373a" stroke="#c9a268" stroke-width="2" stroke-linejoin="miter"/><path d="M1.2 2.2H6.4L7.4 4.6H1.2Z" fill="#c9a268"/><rect x="3.5" y="7.4" width="3.8" height="3.8" rx="1" fill="#74c2f0"/></svg>
<span style="left:69.5px;top:265.15px;font-size:8.6px;line-height:12px;color:#bbbbbb;letter-spacing:-0.1px;">menu</span>
<svg style="left:44.4px;top:280.8px;" width="5.6" height="6.4" viewBox="0 0 5.6 6.4"><path d="M0 0V6.4L5.6 3.2Z" fill="#adadad"/></svg>
<svg style="left:57.25px;top:278.5px;" width="10.2" height="10.2" viewBox="0 0 16 16"><path d="M1.2 2.2H6.4L7.8 4.6H14.8V13.8H1.2Z" fill="#33373a" stroke="#c9a268" stroke-width="2" stroke-linejoin="miter"/><path d="M1.2 2.2H6.4L7.4 4.6H1.2Z" fill="#c9a268"/><rect x="3.5" y="7.4" width="3.8" height="3.8" rx="1" fill="#74c2f0"/></svg>
<span style="left:69.5px;top:278.35px;font-size:8.6px;line-height:12px;color:#bbbbbb;letter-spacing:-0.01px;">mipmap</span>
<svg style="left:44.4px;top:294px;" width="5.6" height="6.4" viewBox="0 0 5.6 6.4"><path d="M0 0V6.4L5.6 3.2Z" fill="#adadad"/></svg>
<svg style="left:57.25px;top:291.7px;" width="10.2" height="10.2" viewBox="0 0 16 16"><path d="M1.2 2.2H6.4L7.8 4.6H14.8V13.8H1.2Z" fill="#33373a" stroke="#c9a268" stroke-width="2" stroke-linejoin="miter"/><path d="M1.2 2.2H6.4L7.4 4.6H1.2Z" fill="#c9a268"/><rect x="3.5" y="7.4" width="3.8" height="3.8" rx="1" fill="#74c2f0"/></svg>
<span style="left:69.5px;top:291.55px;font-size:8.6px;line-height:12px;color:#bbbbbb;letter-spacing:-0.26px;">values</span>
<svg style="left:16.8px;top:307.5px;" width="6.4" height="5.6" viewBox="0 0 6.4 5.6"><path d="M0 0H6.4L3.2 5.6Z" fill="#adadad"/></svg>
<svg style="left:29.9px;top:305.1px;" width="10.4" height="10.4" viewBox="0 0 16 16"><path d="M14.14 9.42A6.30 6.30 0 1 1 4.12 3.04" fill="none" stroke="#9ccb57" stroke-width="2.7"/><path d="M6.37 1.91A6.30 6.30 0 0 1 14.20 6.91" fill="none" stroke="#12a354" stroke-width="2.7"/><circle cx="8" cy="8" r="2.9" fill="#12a858"/></svg>
<span style="left:42.4px;top:304.75px;font-size:8.6px;line-height:12px;color:#bbbbbb;letter-spacing:-0.28px;">Gradle Scripts</span>
<svg style="left:44.05px;top:318.3px;" width="10.4" height="10.4" viewBox="0 0 16 16"><path d="M14.14 9.42A6.30 6.30 0 1 1 4.12 3.04" fill="none" stroke="#9ccb57" stroke-width="2.7"/><path d="M6.37 1.91A6.30 6.30 0 0 1 14.20 6.91" fill="none" stroke="#12a354" stroke-width="2.7"/><circle cx="8" cy="8" r="2.9" fill="#12a858"/></svg>
<span style="left:55.95px;top:317.95px;font-size:8.6px;line-height:12px;color:#bbbbbb;letter-spacing:-0.08px;">build.gradle</span>
<span style="left:102.1px;top:317.95px;font-size:8.6px;line-height:12px;color:#7d8082;letter-spacing:-0.21px;">(Project: AANDK)</span>
<svg style="left:44.05px;top:331.5px;" width="10.4" height="10.4" viewBox="0 0 16 16"><path d="M14.14 9.42A6.30 6.30 0 1 1 4.12 3.04" fill="none" stroke="#9ccb57" stroke-width="2.7"/><path d="M6.37 1.91A6.30 6.30 0 0 1 14.20 6.91" fill="none" stroke="#12a354" stroke-width="2.7"/><circle cx="8" cy="8" r="2.9" fill="#12a858"/></svg>
<span style="left:55.95px;top:331.15px;font-size:8.6px;line-height:12px;color:#bbbbbb;letter-spacing:-0.08px;">build.gradle</span>
<span style="left:102.1px;top:331.15px;font-size:8.6px;line-height:12px;color:#7d8082;letter-spacing:-0.12px;">(Module: app)</span>
<svg style="left:43.45px;top:344.7px;" width="10.2" height="10.2" viewBox="0 0 16 16"><path d="M2.8 0.8H9.6L13.6 4.8V15.2H2.8Z" fill="#3c3f41" stroke="#a7a9ab" stroke-width="1.5"/><path d="M9.2 1V5.2H13.4" fill="none" stroke="#a7a9ab" stroke-width="1.2"/><path d="M5.4 7.6H11M5.4 9.8H11M5.4 12H11" stroke="#4a9bd1" stroke-width="1.7"/></svg>
<span style="left:55.95px;top:344.35px;font-size:8.6px;line-height:12px;color:#bbbbbb;letter-spacing:-0.09px;">proguard-rules.pro</span>
<span style="left:127.6px;top:344.35px;font-size:8.6px;line-height:12px;color:#7d8082;letter-spacing:-0.22px;">(ProGuard Rules for app)</span>
<svg style="left:43.45px;top:357.9px;" width="10.2" height="10.2" viewBox="0 0 16 16"><path d="M2.8 0.8H9.6L13.6 4.8V15.2H2.8Z" fill="#3c3f41" stroke="#a7a9ab" stroke-width="1.5"/><path d="M9.2 1V5.2H13.4" fill="none" stroke="#a7a9ab" stroke-width="1.2"/><rect x="5.2" y="10" width="3.2" height="6" fill="#e25a5a"/><rect x="8.8" y="7.6" width="3.2" height="8.4" fill="#f0a732"/><rect x="12.4" y="5.2" width="3.2" height="10.8" fill="#5fb946"/></svg>
<span style="left:55.95px;top:357.55px;font-size:8.6px;line-height:12px;color:#bbbbbb;letter-spacing:-0.13px;">gradle.properties</span>
<span style="left:120.9px;top:357.55px;font-size:8.6px;line-height:12px;color:#7d8082;letter-spacing:-0.21px;">(Project Properties)</span>
<svg style="left:44.05px;top:371.1px;" width="10.4" height="10.4" viewBox="0 0 16 16"><path d="M14.14 9.42A6.30 6.30 0 1 1 4.12 3.04" fill="none" stroke="#9ccb57" stroke-width="2.7"/><path d="M6.37 1.91A6.30 6.30 0 0 1 14.20 6.91" fill="none" stroke="#12a354" stroke-width="2.7"/><circle cx="8" cy="8" r="2.9" fill="#12a858"/></svg>
<span style="left:55.95px;top:370.75px;font-size:8.6px;line-height:12px;color:#bbbbbb;letter-spacing:-0.13px;">settings.gradle</span>
<span style="left:112.6px;top:370.75px;font-size:8.6px;line-height:12px;color:#7d8082;letter-spacing:-0.21px;">(Project Settings)</span>
<svg style="left:43.45px;top:384.3px;" width="10.2" height="10.2" viewBox="0 0 16 16"><path d="M2.8 0.8H9.6L13.6 4.8V15.2H2.8Z" fill="#3c3f41" stroke="#a7a9ab" stroke-width="1.5"/><path d="M9.2 1V5.2H13.4" fill="none" stroke="#a7a9ab" stroke-width="1.2"/><rect x="5.2" y="10" width="3.2" height="6" fill="#e25a5a"/><rect x="8.8" y="7.6" width="3.2" height="8.4" fill="#f0a732"/><rect x="12.4" y="5.2" width="3.2" height="10.8" fill="#5fb946"/></svg>
<span style="left:55.95px;top:383.95px;font-size:8.6px;line-height:12px;color:#bbbbbb;letter-spacing:-0.13px;">local.properties</span>
<span style="left:114.8px;top:383.95px;font-size:8.6px;line-height:12px;color:#7d8082;letter-spacing:-0.29px;">(SDK Location)</span>
<span style="left:7.9px;top:87px;width:0;height:0;overflow:visible"><span style="position:absolute;display:block;left:0;top:0;transform:translate(-50%,-50%) rotate(-90deg);font-size:8.4px;line-height:10px;letter-spacing:-0.43px;color:#dcdcdc;"><u>1</u>: Project</span></span>
<svg style="left:2.4px;top:103.6px;" width="9.8" height="9.8" viewBox="0 0 9.8 9.8"><circle cx="5.2" cy="5.2" r="5" fill="#8bc34a"/><circle cx="5.2" cy="5.2" r="3.6" fill="#4a8a2a"/><path d="M5.2 3L3.4 8.8M5.2 3L7 8.8M4 6.6H6.4" fill="none" stroke="#e8f4d8" stroke-width="0.9"/><path d="M2.6 5.4A2.7 2.7 0 0 1 7.8 5.4Z" fill="#e8f4d8"/></svg>
<span style="left:7.9px;top:146.4px;width:0;height:0;overflow:visible"><span style="position:absolute;display:block;left:0;top:0;transform:translate(-50%,-50%) rotate(-90deg);font-size:8.4px;line-height:10px;letter-spacing:-0.39px;color:#a9abad;"><u>7</u>: Structure</span></span>
<svg style="left:2.2px;top:165.6px;" width="10" height="12" viewBox="0 0 10 12"><path d="M5.8 2L2 6L5.4 10M2 6L8.4 5.2" fill="none" stroke="#9a9d9f" stroke-width="0.7"/><circle cx="5.8" cy="2" r="1.6" fill="#4a9fd8"/><circle cx="2" cy="6" r="1.6" fill="#4a9fd8"/><circle cx="8.4" cy="5.2" r="1.6" fill="#e8685c"/><circle cx="5.4" cy="10" r="1.6" fill="#e8a23c"/></svg>
<span style="left:7.9px;top:204.95px;width:0;height:0;overflow:visible"><span style="position:absolute;display:block;left:0;top:0;transform:translate(-50%,-50%) rotate(-90deg);font-size:8.4px;line-height:10px;letter-spacing:-0.55px;color:#a9abad;">Captures</span></span>
<svg style="left:2.4px;top:220.6px;" width="9.6" height="12" viewBox="0 0 9.6 12"><circle cx="4.8" cy="6" r="3.9" fill="none" stroke="#9a9d9f" stroke-width="1.2"/><circle cx="4.8" cy="6" r="1.9" fill="#4a9fd8"/><path d="M2 2L3.4 0.6H6.2L7.6 2" fill="none" stroke="#9a9d9f" stroke-width="0.9"/></svg>
<span style="left:7.9px;top:696.75px;width:0;height:0;overflow:visible"><span style="position:absolute;display:block;left:0;top:0;transform:translate(-50%,-50%) rotate(-90deg);font-size:8.4px;line-height:10px;letter-spacing:-0.42px;color:#a9abad;"><u>2</u>: Favorites</span></span>
<svg style="left:2.8px;top:718.4px;" width="8.6" height="8.6" viewBox="0 0 8.6 8.6"><path d="M4.3 0.2L5.6 3L8.5 3.3L6.3 5.3L6.9 8.3L4.3 6.8L1.7 8.3L2.3 5.3L0.1 3.3L3 3Z" fill="#f0a732"/></svg>
<span style="left:7.9px;top:762.25px;width:0;height:0;overflow:visible"><span style="position:absolute;display:block;left:0;top:0;transform:translate(-50%,-50%) rotate(-90deg);font-size:8.4px;line-height:10px;letter-spacing:-0.62px;color:#b4b6b8;">Build Variants</span></span>
<svg style="left:2.93px;top:784.8px;" width="8.63" height="9.43" viewBox="0 0 9.7 10.6"><path d="M2.2 3.1A2.65 3.1 0 0 1 7.5 3.1Z" fill="#8ab51c"/><path d="M2.2 3.5H7.5V7.7A0.6 0.6 0 0 1 6.9 8.3H2.8A0.6 0.6 0 0 1 2.2 7.7Z" fill="#8ab51c"/><rect x="0" y="3.2" width="1.6" height="4" rx="0.8" fill="#8ab51c"/><rect x="8.1" y="3.2" width="1.6" height="4" rx="0.8" fill="#8ab51c"/><rect x="3" y="7.6" width="1.6" height="3" rx="0.8" fill="#8ab51c"/><rect x="5.1" y="7.6" width="1.6" height="3" rx="0.8" fill="#8ab51c"/><path d="M2.9 0L3.6 1M6.8 0L6.1 1" stroke="#8ab51c" stroke-width="0.35"/></svg>
<div style="left:391.6px;top:65px;width:1125.7px;height:15px;background:#3c3f41;"></div>
<div style="left:391.6px;top:64.6px;width:1125.7px;height:0.7px;background:#35383a;"></div>
<div style="left:391.6px;top:65.3px;width:742.8px;height:14.7px;background:#383b3d;"></div>
<div style="left:1134.2px;top:65.3px;width:1px;height:14.7px;background:#323537;"></div>
<div style="left:484px;top:65.3px;width:96px;height:15.3px;background:#4e5254;"></div>
<div style="left:391.6px;top:79.9px;width:1125.7px;height:1.3px;background:#474b4d;"></div>
<div style="left:484px;top:79.9px;width:96px;height:1.3px;background:#4e5254;"></div>
<svg style="left:394.6px;top:67.8px;" width="9.8" height="9.8" viewBox="0 0 16 16"><circle cx="8" cy="8" r="7.8" fill="#a5d8f3"/><text x="8" y="11.4" font-family="Liberation Sans,sans-serif" font-size="9.5" text-anchor="middle" fill="#3a6b8c">C</text></svg>
<span style="left:406.9px;top:66.53px;font-size:8.8px;line-height:12px;color:#bbbbbb;letter-spacing:-0.13px;">MainActivity.java</span>
<svg style="left:473.8px;top:70.6px;" width="5" height="5" viewBox="0 0 5 5"><path d="M0.4 0.4L4.6 4.6M4.6 0.4L0.4 4.6" stroke="#8c8f91" stroke-width="0.9"/></svg>
<svg style="left:486.9px;top:67px;" width="10.2" height="10.2" viewBox="0 0 16 16"><path d="M2.8 0.8H9.6L13.6 4.8V15.2H2.8Z" fill="#3c3f41" stroke="#a7a9ab" stroke-width="1.5"/><path d="M9.2 1V5.2H13.4" fill="none" stroke="#a7a9ab" stroke-width="1.2"/><rect x="0.2" y="6" width="15.6" height="6.6" fill="#c3a4f4"/><text x="8" y="11.7" font-family="Liberation Sans,sans-serif" font-weight="bold" font-size="6.8" text-anchor="middle" fill="#5a3aa8">C++</text></svg>
<span style="left:500px;top:66.53px;font-size:8.8px;line-height:12px;color:#bbbbbb;letter-spacing:-0.15px;">hello-android-jni.c</span>
<svg style="left:571px;top:70.6px;" width="5" height="5" viewBox="0 0 5 5"><path d="M0.4 0.4L4.6 4.6M4.6 0.4L0.4 4.6" stroke="#8c8f91" stroke-width="0.9"/></svg>
<svg style="left:584.6px;top:67px;" width="10.2" height="10.2" viewBox="0 0 16 16"><path d="M2.8 0.8H9.6L13.6 4.8V15.2H2.8Z" fill="#3c3f41" stroke="#a7a9ab" stroke-width="1.5"/><path d="M9.2 1V5.2H13.4" fill="none" stroke="#a7a9ab" stroke-width="1.2"/><rect x="5.2" y="10" width="3.2" height="6" fill="#e25a5a"/><rect x="8.8" y="7.6" width="3.2" height="8.4" fill="#f0a732"/><rect x="12.4" y="5.2" width="3.2" height="10.8" fill="#5fb946"/></svg>
<span style="left:596.5px;top:66.53px;font-size:8.8px;line-height:12px;color:#bbbbbb;letter-spacing:-0.2px;">gradle.properties</span>
<svg style="left:662.7px;top:70.6px;" width="5" height="5" viewBox="0 0 5 5"><path d="M0.4 0.4L4.6 4.6M4.6 0.4L0.4 4.6" stroke="#8c8f91" stroke-width="0.9"/></svg>
<svg style="left:675.9px;top:67px;" width="10" height="10" viewBox="0 0 16 16"><path d="M14.14 9.42A6.30 6.30 0 1 1 4.12 3.04" fill="none" stroke="#9ccb57" stroke-width="2.7"/><path d="M6.37 1.91A6.30 6.30 0 0 1 14.20 6.91" fill="none" stroke="#12a354" stroke-width="2.7"/><circle cx="8" cy="8" r="2.9" fill="#12a858"/></svg>
<span style="left:688.6px;top:66.53px;font-size:8.8px;line-height:12px;color:#bbbbbb;letter-spacing:-0.26px;">settings.gradle</span>
<svg style="left:746.3px;top:70.6px;" width="5" height="5" viewBox="0 0 5 5"><path d="M0.4 0.4L4.6 4.6M4.6 0.4L0.4 4.6" stroke="#8c8f91" stroke-width="0.9"/></svg>
<svg style="left:759.6px;top:67px;" width="10.2" height="10.2" viewBox="0 0 16 16"><path d="M2.8 0.8H9.6L13.6 4.8V15.2H2.8Z" fill="#3c3f41" stroke="#a7a9ab" stroke-width="1.5"/><path d="M9.2 1V5.2H13.4" fill="none" stroke="#a7a9ab" stroke-width="1.2"/><rect x="1" y="6" width="15" height="6.8" fill="#f0a732"/><text x="8.5" y="12.3" font-family="Liberation Sans,sans-serif" font-weight="bold" font-size="8.6" text-anchor="middle" fill="#a05f14">&lt;&gt;</text></svg>
<span style="left:771.9px;top:66.53px;font-size:8.8px;line-height:12px;color:#bbbbbb;letter-spacing:-0.21px;">content_main.xml</span>
<svg style="left:841.8px;top:70.6px;" width="5" height="5" viewBox="0 0 5 5"><path d="M0.4 0.4L4.6 4.6M4.6 0.4L0.4 4.6" stroke="#8c8f91" stroke-width="0.9"/></svg>
<svg style="left:855px;top:67px;" width="10" height="10" viewBox="0 0 16 16"><path d="M14.14 9.42A6.30 6.30 0 1 1 4.12 3.04" fill="none" stroke="#9ccb57" stroke-width="2.7"/><path d="M6.37 1.91A6.30 6.30 0 0 1 14.20 6.91" fill="none" stroke="#12a354" stroke-width="2.7"/><circle cx="8" cy="8" r="2.9" fill="#12a858"/></svg>
<span style="left:867.3px;top:66.53px;font-size:8.8px;line-height:12px;color:#bbbbbb;letter-spacing:-0.36px;">AANDK</span>
<svg style="left:899.9px;top:70.6px;" width="5" height="5" viewBox="0 0 5 5"><path d="M0.4 0.4L4.6 4.6M4.6 0.4L0.4 4.6" stroke="#8c8f91" stroke-width="0.9"/></svg>
<svg style="left:912.4px;top:67px;" width="10.2" height="10.2" viewBox="0 0 16 16"><path d="M2.8 0.8H9.6L13.6 4.8V15.2H2.8Z" fill="#3c3f41" stroke="#a7a9ab" stroke-width="1.5"/><path d="M9.2 1V5.2H13.4" fill="none" stroke="#a7a9ab" stroke-width="1.2"/><rect x="1" y="6" width="15" height="6.8" fill="#f0a732"/><text x="8.5" y="12.3" font-family="Liberation Sans,sans-serif" font-weight="bold" font-size="8.6" text-anchor="middle" fill="#a05f14">&lt;&gt;</text></svg>
<span style="left:925.4px;top:66.53px;font-size:8.8px;line-height:12px;color:#bbbbbb;letter-spacing:-0.26px;">activity_main.xml</span>
<svg style="left:992.3px;top:70.6px;" width="5" height="5" viewBox="0 0 5 5"><path d="M0.4 0.4L4.6 4.6M4.6 0.4L0.4 4.6" stroke="#8c8f91" stroke-width="0.9"/></svg>
<svg style="left:1005.8px;top:67px;" width="10" height="10" viewBox="0 0 16 16"><path d="M14.14 9.42A6.30 6.30 0 1 1 4.12 3.04" fill="none" stroke="#9ccb57" stroke-width="2.7"/><path d="M6.37 1.91A6.30 6.30 0 0 1 14.20 6.91" fill="none" stroke="#12a354" stroke-width="2.7"/><circle cx="8" cy="8" r="2.9" fill="#12a858"/></svg>
<span style="left:1018.1px;top:66.53px;font-size:8.8px;line-height:12px;color:#bbbbbb;letter-spacing:-0.26px;">app</span>
<svg style="left:1035.9px;top:70.6px;" width="5" height="5" viewBox="0 0 5 5"><path d="M0.4 0.4L4.6 4.6M4.6 0.4L0.4 4.6" stroke="#8c8f91" stroke-width="0.9"/></svg>
<svg style="left:1049px;top:68.2px;" width="9.8" height="9.8" viewBox="0 0 16 16"><circle cx="8.4" cy="8.4" r="7.4" fill="#6cc3ee"/><text x="8.6" y="11.8" font-family="Liberation Sans,sans-serif" font-size="9.5" text-anchor="middle" fill="#2a5a7c">C</text><circle cx="3" cy="3" r="3" fill="#e8eef2"/></svg>
<span style="left:1061.8px;top:66.53px;font-size:8.8px;line-height:12px;color:#bbbbbb;letter-spacing:-0.29px;">BuildConfig.java</span>
<svg style="left:1125px;top:70.6px;" width="5" height="5" viewBox="0 0 5 5"><path d="M0.4 0.4L4.6 4.6M4.6 0.4L0.4 4.6" stroke="#8c8f91" stroke-width="0.9"/></svg>
<div style="left:391.6px;top:81.2px;width:1125.7px;height:18.4px;background:#3c3f41;"></div>
<div style="left:391.6px;top:98.9px;width:1125.7px;height:0.8px;background:#35383a;"></div>
<span style="left:398.5px;top:84.83px;font-size:8.8px;line-height:12px;color:#bbbbbb;letter-spacing:-0.22px;">NDK support is an experimental feature and all use cases are not yet supported.</span>
<div style="left:391.6px;top:99.6px;width:1125.7px;height:461.6px;background:#2b2b2b;"></div>
<div style="left:391.6px;top:99.6px;width:15.4px;height:461.6px;background:#313335;"></div>
<div style="left:406.6px;top:99.6px;width:0.7px;height:461.6px;background:#3a3d3f;"></div>
<div style="left:407.3px;top:174.31px;width:1110px;height:11.83px;background:#323232;"></div>
<div style="left:419.7px;top:175.31px;width:4.2px;height:10.63px;background:#3b514d;"></div>
<div style="left:827.7px;top:131.99px;width:4.6px;height:10.63px;background:#3b514d;"></div>
<div style="left:890px;top:99.6px;width:0.7px;height:461.6px;background:#393939;"></div>
<span class="m" style="left:410.2px;top:100.9px;font-size:8px;line-height:9.83px;height:9.83px"><span style="color:#aca625;">#include </span><span style="color:#617c51;">&lt;jni.h&gt;</span></span>
<span class="m" style="left:410.2px;top:122.56px;font-size:8px;line-height:9.83px;height:9.83px"><span style="color:#9ba8b6;text-decoration:underline;text-decoration-color:#426642;text-decoration-thickness:0.7px;text-underline-offset:1.1px;">JNIEXPORT</span><span style="color:#9ba8b6;"> </span><span style="color:#9ba8b6;text-decoration:underline;text-decoration-color:#426642;text-decoration-thickness:0.7px;text-underline-offset:1.1px;">jstring</span><span style="color:#9ba8b6;"> </span><span style="color:#9ba8b6;text-decoration:underline;text-decoration-color:#426642;text-decoration-thickness:0.7px;text-underline-offset:1.1px;">JNICALL</span></span>
<span class="m" style="left:410.2px;top:133.39px;font-size:8px;line-height:9.83px;height:9.83px"><span style="color:#9ba8b6;">Java_com_example_</span><span style="color:#9ba8b6;text-decoration:underline;text-decoration-color:#426642;text-decoration-thickness:0.7px;text-underline-offset:1.1px;">abutt_aandk_</span><span style="color:#9ba8b6;">MainActivity_getMsgFromJni(JNIEnv *env</span><span style="color:#bb6e2e;">,</span><span style="color:#9ba8b6;"> </span><span style="color:#9ba8b6;text-decoration:underline;text-decoration-color:#426642;text-decoration-thickness:0.7px;text-underline-offset:1.1px;">jobject</span><span style="color:#9ba8b6;"> instance) </span><span style="color:#ffef28;font-weight:bold;">{</span></span>
<span class="m" style="left:410.2px;top:155.05px;font-size:8px;line-height:9.83px;height:9.83px"><span style="color:#757575;">  // </span><span style="color:#9ab020;font-style:italic;">TODO</span></span>
<span class="m" style="left:410.2px;top:165.88px;font-size:8px;line-height:9.83px;height:9.83px"><span style="color:#bb6e2e;font-weight:bold;">  return</span><span style="color:#9ba8b6;"> (*env)-&gt;NewStringUTF(env</span><span style="color:#bb6e2e;">,</span><span style="color:#9ba8b6;"> </span><span style="color:#617c51;">"Hello From Jni! This was done in C!"</span><span style="color:#9ba8b6;">)</span><span style="color:#bb6e2e;">;</span></span>
<span class="m" style="left:410.2px;top:176.71px;font-size:8px;line-height:9.83px;height:9.83px"><span style="color:#9ba8b6;">  </span><span style="color:#ffef28;font-weight:bold;">}</span></span>
<div style="left:424px;top:175.01px;width:1.9px;height:11.13px;background:#a4a6a8;"></div>
<svg style="left:1507px;top:100.6px;" width="8.6" height="8" viewBox="0 0 8.6 8"><path d="M0.8 3.6L3.2 5.6L7.8 0.6" fill="none" stroke="#5fae3c" stroke-width="1.7"/><path d="M0.6 7.2L1.8 6.4L3 7.2L4.2 6.4L5.4 7.2L6.6 6.4L7.8 7.2" fill="none" stroke="#5fae3c" stroke-width="0.7"/></svg>
<div style="left:1507.4px;top:164px;width:9.6px;height:1.1px;background:#1f6f9c;"></div>
<div style="left:1517.3px;top:65px;width:14.7px;height:757px;background:#3c3f41;"></div>
<div style="left:1517.2px;top:65px;width:0.9px;height:741px;background:#444749;"></div>
<svg style="left:1519.5px;top:70.4px;" width="10" height="10" viewBox="0 0 16 16"><path d="M14.14 9.42A6.30 6.30 0 1 1 4.12 3.04" fill="none" stroke="#9ccb57" stroke-width="2.7"/><path d="M6.37 1.91A6.30 6.30 0 0 1 14.20 6.91" fill="none" stroke="#12a354" stroke-width="2.7"/><circle cx="8" cy="8" r="2.9" fill="#12a858"/></svg>
<span style="left:1523.6px;top:93.2px;width:0;height:0;overflow:visible"><span style="position:absolute;display:block;left:0;top:0;transform:translate(-50%,-50%) rotate(90deg);font-size:8.4px;line-height:10px;letter-spacing:-0.6px;color:#b4b6b8;">Gradle</span></span>
<svg style="left:1519.75px;top:737.6px;" width="9.51" height="10.39" viewBox="0 0 9.7 10.6"><path d="M2.2 3.1A2.65 3.1 0 0 1 7.5 3.1Z" fill="#8ab51c"/><path d="M2.2 3.5H7.5V7.7A0.6 0.6 0 0 1 6.9 8.3H2.8A0.6 0.6 0 0 1 2.2 7.7Z" fill="#8ab51c"/><rect x="0" y="3.2" width="1.6" height="4" rx="0.8" fill="#8ab51c"/><rect x="8.1" y="3.2" width="1.6" height="4" rx="0.8" fill="#8ab51c"/><rect x="3" y="7.6" width="1.6" height="3" rx="0.8" fill="#8ab51c"/><rect x="5.1" y="7.6" width="1.6" height="3" rx="0.8" fill="#8ab51c"/><path d="M2.9 0L3.6 1M6.8 0L6.1 1" stroke="#8ab51c" stroke-width="0.35"/></svg>
<span style="left:1523.6px;top:773.8px;width:0;height:0;overflow:visible"><span style="position:absolute;display:block;left:0;top:0;transform:translate(-50%,-50%) rotate(90deg);font-size:8.4px;line-height:10px;letter-spacing:-0.29px;color:#c0c2c4;">Android Model</span></span>
<div style="left:14.7px;top:561.2px;width:1502.6px;height:0.8px;background:#2e3032;"></div>
<div style="left:14.7px;top:562px;width:1502.6px;height:14.2px;background:#3a3d3f;"></div>
<span style="left:17px;top:563.55px;font-size:8.6px;line-height:12px;color:#999b9d;letter-spacing:-0.32px;">Android Monitor</span>
<div style="left:14.7px;top:576.2px;width:1502.6px;height:0.7px;background:#323537;"></div>
<svg style="left:1487.5px;top:564.8px;" width="14" height="9" viewBox="0 0 14 9"><g transform="translate(4.4 4.4)"><circle r="2.4" fill="none" stroke="#a6a8aa" stroke-width="1.6"/><g stroke="#a6a8aa" stroke-width="1.4"><path d="M0 -4.4V-2.6M0 4.4V2.6M-4.4 0H-2.6M4.4 0H2.6M-3.1 -3.1L-1.9 -1.9M3.1 3.1L1.9 1.9M-3.1 3.1L-1.9 1.9M3.1 -3.1L1.9 -1.9"/></g></g><path d="M10 3.4H13L11.5 5.2Z" fill="#a6a8aa"/></svg>
<svg style="left:1505px;top:564.6px;" width="9.2" height="9.4" viewBox="0 0 9.2 9.4"><path d="M3.2 0.4V4.6" stroke="#a6a8aa" stroke-width="0.8"/><path d="M1.8 3.4L3.2 5.4L4.6 3.4Z" fill="#a6a8aa"/><rect x="0.7" y="6.5" width="8" height="2.5" rx="0.8" fill="#8a8d8f"/><rect x="0.7" y="6.5" width="4.4" height="2.5" rx="0.8" fill="#c4c6c8"/></svg>
<div style="left:14.7px;top:576.9px;width:1502.6px;height:18.1px;background:#3a3d3f;"></div>
<div style="left:26.2px;top:577.3px;width:283.6px;height:17.4px;background:#3c3f41;border:0.8px solid #4e5254;box-sizing:border-box;border-radius:1.6px"></div>
<div style="left:296px;top:578px;width:0.8px;height:16px;background:#4e5254;"></div>
<svg style="left:299.8px;top:583.9px;" width="5.8" height="4.2" viewBox="0 0 5.8 4.2"><path d="M0 0H5.8 L2.9 4.2Z" fill="#d4d4d4"/></svg>
<div style="left:314.4px;top:577.3px;width:254.7px;height:17.4px;background:#3c3f41;border:0.8px solid #4e5254;box-sizing:border-box;border-radius:1.6px"></div>
<div style="left:555.9px;top:578px;width:0.8px;height:16px;background:#4e5254;"></div>
<svg style="left:559.6px;top:583.9px;" width="5.8" height="4.2" viewBox="0 0 5.8 4.2"><path d="M0 0H5.8 L2.9 4.2Z" fill="#d4d4d4"/></svg>
<svg style="left:32.4px;top:581.4px;" width="10.4" height="8.6" viewBox="0 0 10.4 8.6"><rect x="0" y="0" width="10.4" height="8.6" fill="#9ea1a3"/><rect x="1.2" y="1.2" width="3.8" height="6.2" fill="#2b2b2b"/><rect x="1.9" y="1.9" width="2.4" height="4.8" fill="#56a8e0"/><rect x="6.2" y="1.4" width="3.2" height="2.4" fill="#c9cbcd"/><rect x="6.2" y="4.8" width="3.2" height="2.4" fill="#c9cbcd"/></svg>
<span style="left:44.9px;top:580.35px;font-size:8.6px;line-height:12px;color:#bbbbbb;letter-spacing:-0.38px;">Emulator Nexus_5_API_23_x86</span>
<span style="left:160.2px;top:580.35px;font-size:8.6px;line-height:12px;color:#85888a;letter-spacing:-0.2px;">Android 6.0, API 23</span>
<span style="left:320.7px;top:580.35px;font-size:8.6px;line-height:12px;color:#bbbbbb;letter-spacing:-0.13px;">com.example.abutt.</span>
<span style="left:393.4px;top:580.35px;font-size:8.6px;line-height:12px;color:#d0d0d0;letter-spacing:-0.05px;font-weight:bold;">aandk</span>
<span style="left:420.7px;top:580.35px;font-size:8.6px;line-height:12px;color:#85888a;letter-spacing:-0.43px;">(30155)</span>
<div style="left:14.7px;top:595px;width:1502.6px;height:0.7px;background:#37393b;"></div>
<div style="left:14.7px;top:595.7px;width:1502.6px;height:22.7px;background:#3c3f41;"></div>
<div style="left:34.1px;top:596.2px;width:36.7px;height:22.2px;background:#4e5254;"></div>
<div style="left:70.8px;top:596.2px;width:44.6px;height:22.2px;background:#3b3e40;border:0.7px solid #323537;box-sizing:border-box"></div>
<svg style="left:35.6px;top:602.6px;" width="12" height="8.4" viewBox="0 0 12 8.4"><rect x="0" y="1.4" width="1.6" height="1.6" fill="#e8504f"/><rect x="0" y="3.2" width="1.6" height="1.6" fill="#58b946"/><rect x="0" y="5" width="1.6" height="1.6" fill="#4a8fe0"/><rect x="2.6" y="0.6" width="3" height="6.8" rx="0.5" fill="#f07cf0"/><rect x="3.3" y="1.6" width="1.6" height="2.4" fill="#fbd3fb"/><path d="M6.6 4.2A2.5 2.4 0 0 1 11.6 4.2V7.4H6.6Z" fill="#8ab51c"/><path d="M7.2 0.8L8 2.2M11 0.8L10.2 2.2" stroke="#8ab51c" stroke-width="0.6"/></svg>
<span style="left:48.4px;top:601.25px;font-size:8.6px;line-height:12px;color:#bbbbbb;letter-spacing:-0.29px;">logcat</span>
<span style="left:73.6px;top:601.25px;font-size:8.6px;line-height:12px;color:#bbbbbb;letter-spacing:-0.35px;">Monitors</span>
<svg style="left:105.6px;top:604.2px;" width="8.6" height="5.4" viewBox="0 0 8.6 5.4"><path d="M0.2 2.8H4.4" stroke="#999" stroke-width="0.7"/><path d="M3.4 1.4L5.2 2.8L3.4 4.2Z" fill="#999"/><path d="M7 0.4V2.8M5.9 1L8.1 2.2M8.1 1L5.9 2.2" stroke="#ccc" stroke-width="0.6"/></svg>
<div style="left:1134.1px;top:598.1px;width:48.8px;height:17.2px;background:#3c3f41;border:0.8px solid #4e5254;box-sizing:border-box;border-radius:1.6px"></div>
<div style="left:1169.8px;top:598.8px;width:0.8px;height:15.8px;background:#4e5254;"></div>
<svg style="left:1173.2px;top:604.9px;" width="5.8" height="4.2" viewBox="0 0 5.8 4.2"><path d="M0 0H5.8 L2.9 4.2Z" fill="#d4d4d4"/></svg>
<span style="left:1138px;top:601.85px;font-size:8.6px;line-height:12px;color:#bbbbbb;letter-spacing:-0.21px;">Verbose</span>
<div style="left:1188.8px;top:598.8px;width:137.4px;height:16.8px;background:#45494a;border:0.8px solid #2f3133;box-sizing:border-box;border-radius:8.4px"></div>
<svg style="left:1191.6px;top:602.6px;" width="12" height="9" viewBox="0 0 12 9"><circle cx="3.6" cy="3.6" r="2.5" fill="none" stroke="#d8d8d8" stroke-width="1.2"/><path d="M5.4 5.4L7.8 7.8" stroke="#d8d8d8" stroke-width="1.4"/><path d="M8.6 3.6H11.2L9.9 5Z" fill="#d8d8d8"/></svg>
<div style="left:1332.8px;top:602.7px;width:9.8px;height:9.2px;background:#686b6d;border-radius:1px"></div>
<svg style="left:1333.6px;top:600.8px;" width="10" height="10" viewBox="0 0 10 10"><path d="M1.6 5.4L4 8.2L8.8 1.2" fill="none" stroke="#d2d2d2" stroke-width="1.6"/></svg>
<span style="left:1346.1px;top:602.15px;font-size:8.6px;line-height:12px;color:#bbbbbb;letter-spacing:-0.43px;">Regex</span>
<div style="left:1375.9px;top:598.1px;width:138.8px;height:17.2px;background:#3c3f41;border:0.8px solid #4e5254;box-sizing:border-box;border-radius:1.6px"></div>
<div style="left:1501.1px;top:598.8px;width:0.8px;height:15.8px;background:#4e5254;"></div>
<svg style="left:1505px;top:604.9px;" width="5.8" height="4.2" viewBox="0 0 5.8 4.2"><path d="M0 0H5.8 L2.9 4.2Z" fill="#d4d4d4"/></svg>
<span style="left:1382.7px;top:602.25px;font-size:8.6px;line-height:12px;color:#bbbbbb;letter-spacing:-0.12px;">Show only selected application</span>
<div style="left:14.7px;top:617.8px;width:1502.6px;height:0.8px;background:#323537;"></div>
<div style="left:14.7px;top:595.7px;width:18.9px;height:210.6px;background:#3c3f41;"></div>
<div style="left:33.2px;top:595.7px;width:0.7px;height:210.6px;background:#35383a;"></div>
<div style="left:33.9px;top:618.6px;width:19.3px;height:187.7px;background:#3c3f41;"></div>
<div style="left:53.2px;top:618.9px;width:1455px;height:178.5px;background:#2b2b2b;"></div>
<div style="left:53.2px;top:618.9px;width:1455px;height:178.5px;overflow:hidden">
<span class="m" style="left:8.4px;top:-3.3px;font-size:8px;line-height:10px;color:#a9a9a9">06-15 18:51:49.004 30155-30161/com.example.abutt.aandk W/art: Suspending all threads took: 9.794ms</span>
<span class="m" style="left:8.4px;top:7.53px;font-size:8px;line-height:10px;color:#a9a9a9">06-15 18:52:09.021 30155-30161/com.example.abutt.aandk W/art: Suspending all threads took: 8.477ms</span>
<span class="m" style="left:8.4px;top:18.36px;font-size:8px;line-height:10px;color:#a9a9a9">06-15 18:57:07.391 30155-30161/com.example.abutt.aandk W/art: Suspending all threads took: 5.843ms</span>
<span class="m" style="left:8.4px;top:29.19px;font-size:8px;line-height:10px;color:#a9a9a9">06-15 18:59:37.592 30155-30161/com.example.abutt.aandk W/art: Suspending all threads took: 7.226ms</span>
<span class="m" style="left:8.4px;top:40.02px;font-size:8px;line-height:10px;color:#a9a9a9">06-15 19:06:59.125 30155-30161/com.example.abutt.aandk W/art: Suspending all threads took: 6.162ms</span>
<span class="m" style="left:8.4px;top:50.85px;font-size:8px;line-height:10px;color:#a9a9a9">06-15 19:07:52.689 30155-30161/com.example.abutt.aandk W/art: Suspending all threads took: 6.299ms</span>
<span class="m" style="left:8.4px;top:61.68px;font-size:8px;line-height:10px;color:#a9a9a9">06-15 19:08:52.265 30155-30161/com.example.abutt.aandk W/art: Suspending all threads took: 7.431ms</span>
<span class="m" style="left:8.4px;top:72.51px;font-size:8px;line-height:10px;color:#a9a9a9">06-15 19:11:31.494 30155-30161/com.example.abutt.aandk W/art: Suspending all threads took: 5.022ms</span>
<span class="m" style="left:8.4px;top:83.34px;font-size:8px;line-height:10px;color:#a9a9a9">06-15 19:13:04.653 30155-30161/com.example.abutt.aandk W/art: Suspending all threads took: 9.118ms</span>
<span class="m" style="left:8.4px;top:94.17px;font-size:8px;line-height:10px;color:#a9a9a9">06-15 19:15:57.915 30155-30161/com.example.abutt.aandk W/art: Suspending all threads took: 5.910ms</span>
<span class="m" style="left:8.4px;top:105px;font-size:8px;line-height:10px;color:#a9a9a9">06-15 19:21:30.012 30155-30161/com.example.abutt.aandk W/art: Suspending all threads took: 5.513ms</span>
<span class="m" style="left:8.4px;top:115.83px;font-size:8px;line-height:10px;color:#a9a9a9">06-15 19:23:27.171 30155-30161/com.example.abutt.aandk W/art: Suspending all threads took: 8.782ms</span>
<span class="m" style="left:8.4px;top:126.66px;font-size:8px;line-height:10px;color:#a9a9a9">06-15 19:24:09.756 30155-30161/com.example.abutt.aandk W/art: Suspending all threads took: 5.923ms</span>
<span class="m" style="left:8.4px;top:137.49px;font-size:8px;line-height:10px;color:#a9a9a9">06-15 19:35:42.666 30155-30161/com.example.abutt.aandk W/art: Suspending all threads took: 6.474ms</span>
<span class="m" style="left:8.4px;top:148.32px;font-size:8px;line-height:10px;color:#a9a9a9">06-15 19:38:26.885 30155-30161/com.example.abutt.aandk W/art: Suspending all threads took: 6.519ms</span>
<span class="m" style="left:8.4px;top:159.15px;font-size:8px;line-height:10px;color:#a9a9a9">06-15 19:39:16.934 30155-30161/com.example.abutt.aandk W/art: Suspending all threads took: 5.110ms</span>
</div>
<div style="left:1508.2px;top:618.9px;width:9.1px;height:178.5px;background:#3c3f41;"></div>
<div style="left:1508.7px;top:779.7px;width:8px;height:17.1px;background:#515456;border-radius:1px"></div>
<div style="left:53.2px;top:797.4px;width:1464.1px;height:8.9px;background:#3c3f41;"></div>
<div style="left:61.7px;top:798.2px;width:1073.2px;height:7.4px;background:#565a5c;border-radius:1px"></div>
<div style="left:0px;top:806.3px;width:1532px;height:15.7px;background:#3c3f41;"></div>
<div style="left:0px;top:806px;width:1532px;height:0.7px;background:#323537;"></div>
<div style="left:132.8px;top:806.7px;width:91px;height:14.5px;background:#2d2f30;"></div>
<svg style="left:21.4px;top:809.4px;" width="8.8" height="8.8" viewBox="0 0 8.8 8.8"><rect x="0" y="0" width="8.8" height="8.8" fill="#e9bc6c"/><rect x="1.7" y="1.7" width="5.4" height="5.4" fill="#d9a652"/><path d="M2.6 3.2H6.2M2.6 4.4H6.2M2.6 5.6H6.2" stroke="#f3d598" stroke-width="0.6"/></svg>
<span style="left:32px;top:808.65px;font-size:8.6px;line-height:12px;color:#bbbbbb;letter-spacing:-0.77px;"><u>0</u>: Messages</span>
<svg style="left:85.9px;top:809.5px;" width="9.4" height="9" viewBox="0 0 9.4 9"><rect x="0.4" y="0.4" width="8.6" height="8.2" fill="#0c0c0c" stroke="#8a8d8f" stroke-width="0.8"/><rect x="0.4" y="0.4" width="8.6" height="1.5" fill="#8a8d8f"/><path d="M2 3.6L3.8 5L2 6.4" fill="none" stroke="#e8e8e8" stroke-width="0.8"/><path d="M4.6 6.8H6.8" stroke="#e8e8e8" stroke-width="0.8"/></svg>
<span style="left:96.9px;top:808.65px;font-size:8.6px;line-height:12px;color:#bbbbbb;letter-spacing:-0.4px;">Terminal</span>
<svg style="left:141.63px;top:809.6px;" width="8.24" height="9.01" viewBox="0 0 9.7 10.6"><path d="M2.2 3.1A2.65 3.1 0 0 1 7.5 3.1Z" fill="#8ab51c"/><path d="M2.2 3.5H7.5V7.7A0.6 0.6 0 0 1 6.9 8.3H2.8A0.6 0.6 0 0 1 2.2 7.7Z" fill="#8ab51c"/><rect x="0" y="3.2" width="1.6" height="4" rx="0.8" fill="#8ab51c"/><rect x="8.1" y="3.2" width="1.6" height="4" rx="0.8" fill="#8ab51c"/><rect x="3" y="7.6" width="1.6" height="3" rx="0.8" fill="#8ab51c"/><rect x="5.1" y="7.6" width="1.6" height="3" rx="0.8" fill="#8ab51c"/><path d="M2.9 0L3.6 1M6.8 0L6.1 1" stroke="#8ab51c" stroke-width="0.35"/></svg>
<span style="left:152.3px;top:808.65px;font-size:8.6px;line-height:12px;color:#d4d4d4;letter-spacing:-0.36px;"><u>6</u>: Android Monitor</span>
<svg style="left:231.8px;top:809.4px;" width="7.6" height="9.4" viewBox="0 0 7.6 9.4"><path d="M0.4 0.2V9.2L7.4 4.7Z" fill="#4caf50"/></svg>
<span style="left:241.4px;top:808.65px;font-size:8.6px;line-height:12px;color:#bbbbbb;letter-spacing:-0.77px;"><u>4</u>: Run</span>
<svg style="left:275.2px;top:809.8px;" width="9.2" height="9" viewBox="0 0 9.2 9"><rect x="2.6" y="2.2" width="6.2" height="5.2" rx="0.6" fill="#eaa04a"/><rect x="3.4" y="7" width="4.6" height="1.8" fill="#4a9fd8"/><path d="M4 4.2H7.4M4 5.6H7.4" stroke="#a8661c" stroke-width="0.5"/><circle cx="2.2" cy="2.2" r="2.1" fill="#e4e4e4"/><path d="M1.2 2.2L2 3L3.3 1.4" fill="none" stroke="#555" stroke-width="0.6"/></svg>
<span style="left:285.9px;top:808.65px;font-size:8.6px;line-height:12px;color:#bbbbbb;letter-spacing:-1.17px;">TODO</span>
<svg style="left:1385px;top:809.6px;" width="14" height="9.4" viewBox="0 0 14 9.4"><path d="M0.3 0.4H8.9V6.2H7.6L8 8.2L5.6 6.2H0.3Z" fill="#e8685c"/><rect x="3.9" y="1.1" width="1.1" height="2.9" fill="#fff"/><rect x="3.9" y="4.5" width="1.1" height="1" fill="#fff"/><text x="9.7" y="8.3" font-family="Liberation Sans,sans-serif" font-size="6.2" font-weight="bold" fill="#dcdcdc">7</text></svg>
<span style="left:1400.9px;top:808.65px;font-size:8.6px;line-height:12px;color:#bbbbbb;letter-spacing:-0.77px;">Event Log</span>
<svg style="left:1448.6px;top:810px;" width="7.8" height="7.8" viewBox="0 0 7.8 7.8"><rect x="0" y="0" width="7.8" height="7.8" fill="#5b9ac9"/><rect x="1.4" y="2" width="5" height="4.4" fill="#3c5f7a"/><path d="M2.2 3.2H5.4M2.2 4.6H4.6" stroke="#bcd9ee" stroke-width="0.6"/></svg>
<span style="left:1459px;top:808.65px;font-size:8.6px;line-height:12px;color:#bbbbbb;letter-spacing:-0.61px;">Gradle Console</span>
<div style="left:0px;top:822px;width:1532px;height:14px;background:#3c3f41;"></div>
<div style="left:0px;top:821.1px;width:1532px;height:0.8px;background:#35383a;"></div>
<svg style="left:4.6px;top:824px;" width="10.4" height="9.6" viewBox="0 0 10.4 9.6"><rect x="0.6" y="0.6" width="9.2" height="7.4" fill="#4a4d4f" stroke="#8c8f91" stroke-width="1.1"/><path d="M0 9H10.4" stroke="#8c8f91" stroke-width="1.1"/></svg>
<span style="left:19.5px;top:823.05px;font-size:8.6px;line-height:12px;color:#bbbbbb;letter-spacing:-0.16px;">Gradle build finished in 1s 48ms (today 6:35 PM)</span>
<span style="left:1333.3px;top:823.05px;font-size:8.6px;line-height:12px;color:#8d9092;letter-spacing:-0.59px;">8:4</span>
<span style="left:1351.8px;top:823.05px;font-size:8.6px;line-height:12px;color:#8d9092;letter-spacing:-0.72px;">LF</span>
<span style="left:1370.2px;top:823.05px;font-size:8.6px;line-height:12px;color:#8d9092;letter-spacing:-0.35px;">UTF-8</span>
<svg style="left:1361px;top:826.6px;" width="2.6" height="5.6" viewBox="0 0 2.6 5.6"><path d="M0 2.2L1.3 0.4L2.6 2.2ZM0 3.4L1.3 5.2L2.6 3.4Z" fill="#8d9092"/></svg>
<svg style="left:1393.4px;top:826.6px;" width="2.6" height="5.6" viewBox="0 0 2.6 5.6"><path d="M0 2.2L1.3 0.4L2.6 2.2ZM0 3.4L1.3 5.2L2.6 3.4Z" fill="#8d9092"/></svg>
<span style="left:1401.4px;top:823.05px;font-size:8.6px;line-height:12px;color:#8d9092;letter-spacing:-0.04px;">Context: &lt;no context&gt;</span>
<svg style="left:1502.4px;top:824.6px;" width="7" height="8" viewBox="0 0 7 8"><path d="M1 3.6V2.2A1.5 1.5 0 0 1 4 2.2V3" fill="none" stroke="#8d9092" stroke-width="0.9"/><rect x="2.2" y="3.6" width="4.6" height="4" fill="#8d9092"/><rect x="3.9" y="4.8" width="1.2" height="1.6" fill="#3c3f41"/></svg>
<svg style="left:1518.4px;top:823.6px;" width="9.4" height="11" viewBox="0 0 9.4 11"><rect x="1.2" y="0.6" width="7" height="6.4" rx="1.6" fill="none" stroke="#66696b" stroke-width="0.9"/><circle cx="3.4" cy="3.4" r="0.8" fill="#66696b"/><circle cx="6" cy="3.4" r="0.8" fill="#66696b"/><path d="M0.6 10.6V9A1.6 1.6 0 0 1 2.2 7.6H7.2A1.6 1.6 0 0 1 8.8 9V10.6" fill="none" stroke="#66696b" stroke-width="0.9"/></svg>
<div style="left:1324.2px;top:833.7px;width:193.8px;height:1.8px;background:#dedede;"></div>
<div style="left:14.1px;top:561.3px;width:1.5px;height:244.7px;background:#404244;"></div>
<svg style="left:18.2px;top:599.4px;" width="11.4" height="9.6" viewBox="0 0 11.4 9.6"><rect x="0.4" y="2.4" width="10.6" height="6.8" rx="0.8" fill="#b0b3b5"/><rect x="1.6" y="0.8" width="2.4" height="1.8" fill="#b0b3b5"/><circle cx="5.7" cy="5.8" r="2.6" fill="#3c3f41"/><circle cx="5.7" cy="5.8" r="1.9" fill="#5aabe6"/></svg>
<svg style="left:19px;top:617px;" width="10.2" height="10.2" viewBox="0 0 10.2 10.2"><rect x="0" y="0" width="10.2" height="10.2" fill="#6a6d6f"/><path d="M3.8 3L7 5.1L3.8 7.2Z" fill="#8f9294"/></svg>
<svg style="left:18.2px;top:633.4px;" width="12" height="11.6" viewBox="0 0 12 11.6"><path d="M3.4 0.6H11.4V8.6H8.8" fill="none" stroke="#8f9294" stroke-width="0.9"/><path d="M6 0.6V4M8.8 0.6V4M3.4 3.2H11.4" stroke="#8f9294" stroke-width="0.6"/><circle cx="4.4" cy="6.2" r="3.3" fill="#3c3f41" stroke="#b0b3b5" stroke-width="1.3"/><circle cx="4.4" cy="6.2" r="1.9" fill="#4a9be0"/><path d="M7 8.6L9.2 10.8" stroke="#b0b3b5" stroke-width="1.5"/></svg>
<svg style="left:19.2px;top:655.4px;" width="9.8" height="9.8" viewBox="0 0 9.8 9.8"><circle cx="4.9" cy="4.9" r="4.7" fill="#e8685c"/><path d="M2.9 2.9L6.9 6.9M6.9 2.9L2.9 6.9" stroke="#f8c8c2" stroke-width="1.1"/></svg>
<span style="left:20.4px;top:674.82px;font-size:13.6px;line-height:14px;color:#4a9fd8;font-weight:bold;">?</span>
<svg style="left:38.2px;top:622.8px;" width="10" height="11.4" viewBox="0 0 10 11.4"><path d="M1.4 3.8H8.6L8 11H2Z" fill="#4a9fd8"/><path d="M3.4 5V9.8M5 5V9.8M6.6 5V9.8" stroke="#2c6c9c" stroke-width="0.7"/><path d="M0.6 3H9.4" stroke="#b0b3b5" stroke-width="1.2"/><path d="M3.6 2.6L5 0.8L6.4 2.6" fill="none" stroke="#b0b3b5" stroke-width="0.9"/></svg>
<div style="left:35.4px;top:638.2px;width:16px;height:15.4px;background:#4e5254;border:0.7px solid #5e6264;box-sizing:border-box;border-radius:1px"></div>
<svg style="left:37.6px;top:640px;" width="11.6" height="11.6" viewBox="0 0 11.6 11.6"><rect x="0.6" y="1.8" width="8.6" height="8.6" fill="none" stroke="#9a9d9f" stroke-width="1"/><rect x="1.2" y="2.4" width="7.4" height="2" fill="#9a9d9f"/><path d="M8.6 0.2V6" stroke="#d36fd8" stroke-width="1.5"/><path d="M6.4 5L8.6 8L10.8 5Z" fill="#d36fd8"/></svg>
<svg style="left:38.6px;top:657.6px;" width="8.8" height="9.2" viewBox="0 0 8.8 9.2"><path d="M4.4 0.4L0.4 4.6H3V8.8H5.8V4.6H8.4Z" fill="#4a9fd8"/></svg>
<svg style="left:38.6px;top:675.6px;" width="8.8" height="9.2" viewBox="0 0 8.8 9.2"><g transform="translate(0 9.2) scale(1 -1)"><path d="M4.4 0.4L0.4 4.6H3V8.8H5.8V4.6H8.4Z" fill="#4a9fd8"/></g></svg>
<svg style="left:37.6px;top:692.2px;" width="11" height="10.4" viewBox="0 0 11 10.4"><path d="M0.4 1H7M2.6 5.2H7.6M0.4 9.4H7" stroke="#9a9d9f" stroke-width="1"/><path d="M8 1.2Q10.4 1.6 10 4.4M3 5.2Q0.6 5.6 1 8.2M8 9.2Q10.4 8.8 10 6.2" fill="none" stroke="#4a9fd8" stroke-width="1.1"/><path d="M8.6 3.4L10 5.6L10.9 3.2ZM0 7.2L1 9.6L2.4 7.4Z" fill="#4a9fd8"/></svg>
<svg style="left:37.6px;top:709.6px;" width="11" height="9.6" viewBox="0 0 11 9.6"><rect x="2.4" y="0.4" width="6.2" height="2.6" fill="#9a9d9f"/><rect x="0.4" y="2.6" width="10.2" height="4" rx="0.6" fill="#4a9fd8"/><rect x="2" y="5.2" width="7" height="4.2" fill="#9a9d9f"/><rect x="3.2" y="6" width="4.6" height="2.6" fill="#4a4d4f"/><path d="M3.8 6.8H7.2M3.8 7.8H7.2" stroke="#8a8d8f" stroke-width="0.4"/></svg>
<svg style="left:38.2px;top:731px;" width="10.6" height="10.6" viewBox="0 0 10.6 10.6"><path d="M8.2 5.4A3.7 3.7 0 1 1 4.6 1.8" fill="none" stroke="#4caf50" stroke-width="1.6"/><path d="M4.4 -0.4L7.2 1.9L4.4 4.2Z" fill="#4caf50"/><rect x="5.2" y="5.2" width="5.2" height="5.2" fill="#a2a5a7"/></svg>
<svg style="left:38.6px;top:748.4px;" width="9.4" height="9.4" viewBox="0 0 9.4 9.4"><g transform="translate(4.7 4.7)"><circle r="2.5" fill="none" stroke="#a8abad" stroke-width="1.7"/><g stroke="#a8abad" stroke-width="1.5"><path d="M0 -4.5V-2.6M0 4.5V2.6M-4.5 0H-2.6M4.5 0H2.6M-3.2 -3.2L-1.9 -1.9M3.2 3.2L1.9 1.9M-3.2 3.2L-1.9 1.9M3.2 -3.2L1.9 -1.9"/></g></g></svg>
<span style="left:39.6px;top:767.22px;font-size:13.6px;line-height:14px;color:#4a9fd8;font-weight:bold;">?</span>
<div style="left:36px;top:724.1px;width:15px;height:0.7px;background:#4a4d4f;"></div>
<div style="left:36px;top:762.9px;width:15px;height:0.7px;background:#4a4d4f;"></div>
<div style="left:17px;top:670.2px;width:14px;height:0.7px;background:#4a4d4f;"></div>
<div style="left:17px;top:649.3px;width:14px;height:0.7px;background:#4a4d4f;"></div>
<div style="left:0px;top:836px;width:1536px;height:28px;background:#0e0e0e;"></div>
<div style="left:0px;top:836px;width:33.9px;height:28px;background:#000000;"></div>
<div style="left:33.9px;top:836px;width:240.5px;height:28px;background:#333333;"></div>
<svg style="left:11.8px;top:845.2px;" width="10.4" height="9.8" viewBox="0 0 10.4 9.8"><path d="M0 1.5L4.2 0.9V4.7H0ZM4.9 0.8L10.4 0V4.7H4.9ZM0 5.3H4.2V9L0 8.4ZM4.9 5.3H10.4V9.8L4.9 9.1Z" fill="#ffffff"/></svg>
<svg style="left:39.6px;top:841.2px;" width="18.2" height="18.2" viewBox="0 0 18.2 18.2"><circle cx="9.1" cy="9.1" r="7.5" fill="none" stroke="#ffffff" stroke-width="2"/></svg>
<span style="left:64.3px;top:843.28px;font-size:10.6px;line-height:14px;color:#a6a6a6;letter-spacing:-0.37px;">Ask me anything</span>
<svg style="left:255.6px;top:843.6px;" width="9" height="13.4" viewBox="0 0 9 13.4"><rect x="2.6" y="0.4" width="3.8" height="7.4" rx="1.9" fill="none" stroke="#9a9a9a" stroke-width="0.9"/><path d="M0.8 5.6V6.4A3.7 3.7 0 0 0 8.2 6.4V5.6M4.5 10.2V12.6M2.4 12.7H6.6" fill="none" stroke="#9a9a9a" stroke-width="0.9"/></svg>
<svg style="left:282.4px;top:843.4px;" width="17" height="13.4" viewBox="0 0 17 13.4"><rect x="3.6" y="1" width="9.8" height="11.4" fill="none" stroke="#e6e6e6" stroke-width="1"/><path d="M2 2.8H0.6V10.6H2M15 2.8H16.4V10.6H15" fill="none" stroke="#e6e6e6" stroke-width="0.9"/></svg>
<svg style="left:318.6px;top:842.4px;" width="16" height="15" viewBox="0 0 16 15"><path d="M0.4 1.2H5.6L6.8 2.6H15V13.6H0.4Z" fill="#f5c64f"/><path d="M0.4 4.4H15.6V13.6H0.4Z" fill="#fbe08e"/><path d="M3.4 8.4H12.6V14.6H10V11.4H6V14.6H3.4Z" fill="#3aa0f0"/><rect x="4.4" y="7.2" width="7.2" height="1.6" fill="#1c74c4"/></svg>
<svg style="left:352.6px;top:840.8px;" width="16.4" height="18" viewBox="0 0 16.4 18"><path d="M5.2 4.8V3.4A3 3 0 0 1 11.2 3.4V4.8" fill="none" stroke="#ffffff" stroke-width="0.9"/><path d="M0.8 4.6L15.6 4V17.4L0.8 16.2Z" fill="#ffffff"/><path d="M4.6 7.8L7.6 7.5V10.2H4.6ZM8.4 7.4L12 7V10.2H8.4ZM4.6 11H7.6V13.8L4.6 13.5ZM8.4 11H12V14.3L8.4 13.9Z" fill="#0e0e0e"/></svg>
<svg style="left:387.4px;top:841.6px;" width="16.6" height="16.6" viewBox="0 0 16.6 16.6"><circle cx="8.3" cy="8.3" r="8.1" fill="#e8453c"/><path d="M8.3 8.3L1.3 4.2A8.1 8.1 0 0 0 9.2 16.35Z" fill="#2ba24c"/><path d="M8.3 8.3L9.2 16.35A8.1 8.1 0 0 0 15.9 5.4L8.3 5.4Z" fill="#fbc116"/><circle cx="8.3" cy="8.3" r="3.8" fill="#f2f2f2"/><circle cx="8.3" cy="8.3" r="3" fill="#4a8af4"/></svg>
<div style="left:381.7px;top:862.4px;width:28.2px;height:1.6px;background:#a3d468;"></div>
<svg style="left:422.6px;top:841.8px;" width="16.4" height="16.4" viewBox="0 0 16.4 16.4"><circle cx="8.2" cy="8.2" r="8.1" fill="#1ed760"/><path d="M3.6 6.1Q8.4 4.6 12.9 7M4.2 8.6Q8.2 7.5 11.9 9.5M4.8 10.9Q8 10.1 10.9 11.7" fill="none" stroke="#0e0e0e" stroke-width="1.35" stroke-linecap="round"/></svg>
<div style="left:416.8px;top:862.4px;width:28.2px;height:1.6px;background:#a3d468;"></div>
<div style="left:457.5px;top:841.3px;width:16.2px;height:16.2px;background:#0a1a3a;border:1px solid #2f9be8;box-sizing:border-box"></div>
<span style="left:460.46px;top:843.73px;font-size:8.9px;line-height:12px;color:#35a8f5;font-weight:bold;letter-spacing:-0.3px;">Ps</span>
<div style="left:492.2px;top:841.3px;width:16.2px;height:16.2px;background:#0b2232;border:1px solid #86b1cc;box-sizing:border-box"></div>
<span style="left:496.15px;top:843.73px;font-size:8.9px;line-height:12px;color:#b4d8ee;font-weight:bold;letter-spacing:-0.3px;">Lr</span>
<div style="left:527px;top:841.3px;width:16.2px;height:16.2px;background:#2a0a32;border:1px solid #d06cd4;box-sizing:border-box"></div>
<span style="left:530.7px;top:843.73px;font-size:8.9px;line-height:12px;color:#e79aec;font-weight:bold;letter-spacing:-0.3px;">Pr</span>
<div style="left:562px;top:841.3px;width:16.2px;height:16.2px;background:#1f0a3a;border:1px solid #9a6fd2;box-sizing:border-box"></div>
<span style="left:564.71px;top:843.73px;font-size:8.9px;line-height:12px;color:#c9a8f2;font-weight:bold;letter-spacing:-0.3px;">Ae</span>
<div style="left:596.8px;top:841.3px;width:16.2px;height:16.2px;background:#002b2b;border:1px solid #1fa6a6;box-sizing:border-box"></div>
<span style="left:599.51px;top:843.73px;font-size:8.9px;line-height:12px;color:#3cd2ca;font-weight:bold;letter-spacing:-0.3px;">Sg</span>
<div style="left:631.3px;top:841.3px;width:16.2px;height:16.2px;background:#002b25;border:1px solid #1a9e8e;box-sizing:border-box"></div>
<span style="left:633.77px;top:843.73px;font-size:8.9px;line-height:12px;color:#32caa9;font-weight:bold;letter-spacing:-0.3px;">Au</span>
<div style="left:666.2px;top:841.3px;width:16.2px;height:16.2px;background:#2c1300;border:1px solid #c8641a;box-sizing:border-box"></div>
<span style="left:670.15px;top:843.73px;font-size:8.9px;line-height:12px;color:#f28c28;font-weight:bold;letter-spacing:-0.3px;">Ai</span>
<div style="left:692.4px;top:836px;width:33.9px;height:28px;background:#3d3d3d;"></div>
<div style="left:692.4px;top:862.4px;width:33.9px;height:1.6px;background:#a3d468;"></div>
<svg style="left:700.4px;top:841px;" width="18" height="18" viewBox="0 0 18 18"><circle cx="9" cy="8.6" r="7.4" fill="#8bc34a"/><path d="M9 3.2L4.2 16.6M9 3.2L13.8 16.6M5.8 12H12.2" fill="none" stroke="#ffffff" stroke-width="1.2"/><circle cx="9" cy="4.6" r="1.5" fill="#8bc34a" stroke="#ffffff" stroke-width="0.9"/></svg>
<svg style="left:739.2px;top:842.2px;" width="12" height="13.8" viewBox="0 0 12 13.8"><path d="M0.3 6.9L5.2 1.2L11.4 0.4L11.6 6.9L11.4 13.4L5.2 12.6Z" fill="#ffffff"/><path d="M6.6 6.9H11.6M6.6 6.9L3.4 2.4M6.6 6.9L3.4 11.4" stroke="#0e0e0e" stroke-width="1.15"/><path d="M8.6 2.2L9.6 3.6L8.2 3.6ZM8.6 11.6L9.6 10.2L8.2 10.2Z" fill="#0e0e0e"/></svg>
<svg style="left:770.8px;top:842px;" width="16.4" height="16.4" viewBox="0 0 16.4 16.4"><circle cx="8.2" cy="8.2" r="7.6" fill="#1a1a1a" stroke="#d8d8d8" stroke-width="1.1"/><text x="8.2" y="12" font-family="Liberation Serif,serif" font-weight="bold" font-size="10.5" text-anchor="middle" fill="#e8e8e8">U</text></svg>
<svg style="left:806px;top:841.4px;" width="15" height="17.6" viewBox="0 0 15 17.6"><path d="M0.6 1.8Q0.6 0.6 1.8 0.6H13.2Q14.4 0.6 14.4 1.8V13.2L7.5 17L0.6 13.2Z" fill="#2a2a2a" stroke="#b4b4b4" stroke-width="1"/><text x="7.5" y="9" font-family="Liberation Sans,sans-serif" font-weight="bold" font-size="7.4" text-anchor="middle" fill="#eaeaea" textLength="11.6" lengthAdjust="spacingAndGlyphs">EPIC</text><rect x="2.4" y="10.8" width="10.2" height="1.6" fill="#8a8a8a"/></svg>
<svg style="left:839.8px;top:841.3px;" width="17.3" height="17" viewBox="0 0 17.3 17"><defs><linearGradient id="g839" x1="0" y1="0" x2="0" y2="1"><stop offset="0" stop-color="#2fb4be"/><stop offset="0.6" stop-color="#55c8cc"/><stop offset="1" stop-color="#c8eeee"/></linearGradient></defs><rect width="17.3" height="17" fill="url(#g839)"/><path d="M3 13L6.4 3.4L8.6 7.6L10.8 3.4L14.2 13L11.4 9.6L8.6 12.4L5.8 9.6Z" fill="#0f8894" opacity="0.85"/><rect x="10.6" y="14.2" width="5.2" height="1.4" fill="#e8f8f8" opacity="0.8"/></svg>
<svg style="left:874.6px;top:841.3px;" width="17.3" height="17" viewBox="0 0 17.3 17"><defs><linearGradient id="g874" x1="0" y1="0" x2="0" y2="1"><stop offset="0" stop-color="#2fb4be"/><stop offset="0.6" stop-color="#55c8cc"/><stop offset="1" stop-color="#c8eeee"/></linearGradient></defs><rect width="17.3" height="17" fill="url(#g874)"/><path d="M3 13L6.4 3.4L8.6 7.6L10.8 3.4L14.2 13L11.4 9.6L8.6 12.4L5.8 9.6Z" fill="#0f8894" opacity="0.85"/><rect x="10.6" y="14.2" width="5.2" height="1.4" fill="#e8f8f8" opacity="0.8"/></svg>
<svg style="left:909.6px;top:841.6px;" width="16.6" height="16.6" viewBox="0 0 16.6 16.6"><rect width="16.6" height="16.6" rx="2.6" fill="#000000"/><path d="M2 5L5.6 5L9 11.6L12.4 11.6M6.4 8.4A2.6 2.6 0 1 1 6.4 8.6M10 5L14.6 11.6" fill="none" stroke="#76d02c" stroke-width="1.7"/></svg>
<svg style="left:945.8px;top:841.6px;" width="14.6" height="17.2" viewBox="0 0 14.6 17.2"><rect x="0.8" y="3" width="13" height="13.4" fill="none" stroke="#ffffff" stroke-width="1.2"/><rect x="0.8" y="3" width="13" height="3.4" fill="#ffffff"/><rect x="2.8" y="0.4" width="1.6" height="3.4" fill="#ffffff"/><rect x="10.2" y="0.4" width="1.6" height="3.4" fill="#ffffff"/><g fill="#ffffff"><rect x="5.6" y="8" width="1.8" height="1.6"/><rect x="8.2" y="8" width="1.8" height="1.6"/><rect x="10.8" y="8" width="1.8" height="1.6"/><rect x="3" y="10.6" width="1.8" height="1.6"/><rect x="5.6" y="10.6" width="1.8" height="1.6"/><rect x="8.2" y="10.6" width="1.8" height="1.6"/><rect x="10.8" y="10.6" width="1.8" height="1.6"/><rect x="3" y="13.2" width="1.8" height="1.6"/><rect x="5.6" y="13.2" width="1.8" height="1.6"/><rect x="8.2" y="13.2" width="1.8" height="1.6"/></g></svg>
<svg style="left:978.8px;top:843.2px;" width="17.6" height="14" viewBox="0 0 17.6 14"><path d="M0.4 5.2L8.8 0.4L17.2 5.2V13.6H0.4Z" fill="#ffffff"/><path d="M2 6.4L9.4 9.4L15.4 5.2L9 8Z" fill="#0e0e0e"/><path d="M2 6.2L15.6 5.4L9.2 9.2Z" fill="#0e0e0e"/></svg>
<svg style="left:1015.8px;top:843.4px;" width="13.8" height="13.8" viewBox="0 0 13.8 13.8"><circle cx="6.9" cy="6.9" r="6.7" fill="#ffffff"/><text x="6.9" y="10.6" font-family="Liberation Sans,sans-serif" font-weight="bold" font-size="10.4" text-anchor="middle" fill="#0e0e0e">#</text></svg>
<svg style="left:1049.8px;top:841.8px;" width="15.8" height="16.4" viewBox="0 0 15.8 16.4"><rect width="15.8" height="16.4" fill="#000000"/><path d="M1.6 13.8Q3.4 8.6 5.4 6.6L5.6 12.6ZM5.2 14Q6.6 6.6 9 3.4L9.4 12.8ZM9 14.2Q10.2 5 12.6 1.6L13.8 12.6Q11.6 14.2 9 14.2Z" fill="#ffffff"/><path d="M1.2 14.6Q7.6 16.2 14.2 13.4L13.8 14.6Q7.6 17 1.2 14.6Z" fill="#ffffff"/></svg>
<svg style="left:1084.8px;top:841.8px;" width="15.8" height="16.4" viewBox="0 0 15.8 16.4"><rect width="15.8" height="16.4" fill="#000000"/><path d="M1.6 13.8Q3.4 8.6 5.4 6.6L5.6 12.6ZM5.2 14Q6.6 6.6 9 3.4L9.4 12.8ZM9 14.2Q10.2 5 12.6 1.6L13.8 12.6Q11.6 14.2 9 14.2Z" fill="#ffffff"/><path d="M1.2 14.6Q7.6 16.2 14.2 13.4L13.8 14.6Q7.6 17 1.2 14.6Z" fill="#ffffff"/></svg>
<svg style="left:1117.8px;top:841.2px;" width="17.4" height="17.2" viewBox="0 0 17.4 17.2"><rect width="17.4" height="17.2" fill="#ffffff"/><text x="8.7" y="14.3" font-family="Liberation Sans,sans-serif" font-weight="bold" font-size="15" text-anchor="middle" fill="#e50914" textLength="7.4" lengthAdjust="spacingAndGlyphs">N</text></svg>
<div style="left:1112.6px;top:862.4px;width:28.2px;height:1.6px;background:#a3d468;"></div>
<svg style="left:1153px;top:841.6px;" width="17" height="17" viewBox="0 0 17 17"><defs><linearGradient id="st" x1="0" y1="0" x2="0" y2="1"><stop offset="0" stop-color="#12366e"/><stop offset="1" stop-color="#1a78c0"/></linearGradient></defs><circle cx="8.5" cy="8.5" r="8.3" fill="url(#st)"/><circle cx="11.2" cy="6.2" r="2.7" fill="none" stroke="#ffffff" stroke-width="1.1"/><circle cx="11.2" cy="6.2" r="1.1" fill="#ffffff"/><path d="M0.6 8.8L5.6 11L8.8 8.2L10 9.4L7.2 12.6A2.3 2.3 0 0 1 3 12.8L0.8 11.6Z" fill="#ffffff"/></svg>
<svg style="left:1188.1px;top:844.7px;" width="16" height="11.8" viewBox="0 0 16 11.8"><rect width="16" height="11.8" rx="1" fill="#7cb342"/><rect x="5.4" y="1.8" width="5.2" height="10" fill="#5a5a5a"/><rect x="6.2" y="2.8" width="3.6" height="8" fill="#d8d8d8"/></svg>
<div style="left:1182.5px;top:862.4px;width:28.2px;height:1.6px;background:#a3d468;"></div>
<svg style="left:1224px;top:841.6px;" width="14.6" height="16.8" viewBox="0 0 14.6 16.8"><path d="M7.3 0.4A6.9 6.9 0 0 1 7.3 14.2V16.6Q5.2 15.2 3.6 13A6.9 6.9 0 0 1 7.3 0.4Z" fill="#3fae49"/><path d="M3.8 5.2H6.6V7.6Q6.6 9.2 4.8 9.8V8.2H3.8ZM8 5.2H10.8V7.6Q10.8 9.2 9 9.8V8.2H8Z" fill="#ffffff"/></svg>
<div style="left:1216.9px;top:862.4px;width:28.2px;height:1.6px;background:#a3d468;"></div>
<svg style="left:1366px;top:848px;" width="7.6" height="4.8" viewBox="0 0 7.6 4.8"><path d="M0.4 4.4L3.8 0.8L7.2 4.4" fill="none" stroke="#ffffff" stroke-width="0.9"/></svg>
<svg style="left:1381px;top:844.8px;" width="11.6" height="11.2" viewBox="0 0 11.6 11.2"><path d="M2.8 0.4L5.6 2.2L2.8 4L0 2.2ZM8.4 0.4L11.2 2.2L8.4 4L5.6 2.2ZM2.8 4L5.6 5.8L2.8 7.6L0 5.8ZM8.4 4L11.2 5.8L8.4 7.6L5.6 5.8ZM5.6 6.6L8 8.2L5.6 9.8L3.2 8.2Z" fill="#ffffff"/><circle cx="9.2" cy="9" r="2.1" fill="#4caf50"/></svg>
<svg style="left:1397.6px;top:844.6px;" width="11.2" height="11.2" viewBox="0 0 11.2 11.2"><text x="5.6" y="10.6" font-family="Liberation Sans,sans-serif" font-weight="bold" font-size="14" text-anchor="middle" fill="#ffffff" textLength="10.4" lengthAdjust="spacingAndGlyphs" transform="rotate(-12 5.6 5.6)">#</text></svg>
<svg style="left:1414.6px;top:844.6px;" width="12" height="11.4" viewBox="0 0 12 11.4"><path d="M1 10.8A9.8 9.8 0 0 1 11.2 1" fill="none" stroke="#8a8a8a" stroke-width="0.9"/><path d="M3.6 10.8A7.2 7.2 0 0 1 11.2 3.6M6.2 10.8A4.6 4.6 0 0 1 11.2 6.2" fill="none" stroke="#ffffff" stroke-width="1"/><path d="M8.6 10.8A2.2 2.2 0 0 1 11.2 8.6V10.8Z" fill="#ffffff"/></svg>
<svg style="left:1430.6px;top:845px;" width="12" height="10.6" viewBox="0 0 12 10.6"><path d="M0.4 3.6H2.6L5.4 0.8V9.8L2.6 7H0.4Z" fill="none" stroke="#ffffff" stroke-width="0.9"/><path d="M7 3.6Q8 5.3 7 7M8.6 2.4Q10.4 5.3 8.6 8.2" fill="none" stroke="#ffffff" stroke-width="0.8"/><path d="M10.2 1.2Q12.6 5.3 10.2 9.4" fill="none" stroke="#8a8a8a" stroke-width="0.8"/></svg>
<svg style="left:1448.6px;top:844.4px;" width="11" height="11.6" viewBox="0 0 11 11.6"><path d="M0.4 0.4H10.6V8.6H7L5 11V8.6H0.4Z" fill="#ffffff"/><path d="M2.2 2.8H8.8M2.2 4.6H8.8M2.2 6.4H6.6" stroke="#0e0e0e" stroke-width="0.6"/></svg>
<svg style="left:1464.6px;top:845.2px;" width="18.8" height="10.4" viewBox="0 0 18.8 10.4"><rect x="0.5" y="0.5" width="17.8" height="9.4" rx="0.8" fill="none" stroke="#ffffff" stroke-width="0.9"/><path d="M2.6 3.2H16.2M2.6 5.2H16.2" stroke="#ffffff" stroke-width="0.9" stroke-dasharray="1.2 0.9"/><path d="M4.6 7.4H14.2" stroke="#ffffff" stroke-width="0.9"/></svg>
<span style="left:1494.4px;top:837.82px;font-size:9px;line-height:12px;color:#ececec;letter-spacing:-0.67px;">7:39 PM</span>
<span style="left:1490.2px;top:849.72px;font-size:9px;line-height:12px;color:#ececec;letter-spacing:-0.34px;">6/15/2016</span>
<div style="left:1532px;top:836px;width:0.6px;height:28px;background:#4a4a4a;"></div>
<div style="left:1532px;top:0px;width:4px;height:836px;background:#dcdcdc;"></div>
<div style="left:1533px;top:0px;width:3px;height:16.6px;background:#ffffff;"></div>
<div style="left:1534.6px;top:17.4px;width:1.4px;height:42.2px;background:#bdbdbd;"></div>
<div style="left:1532.5px;top:137.8px;width:2.4px;height:161.6px;background:#a9a9a9;"></div>
<div style="left:1531.7px;top:0px;width:0.9px;height:836px;background:#86a26c;"></div>
</div></body></html>
